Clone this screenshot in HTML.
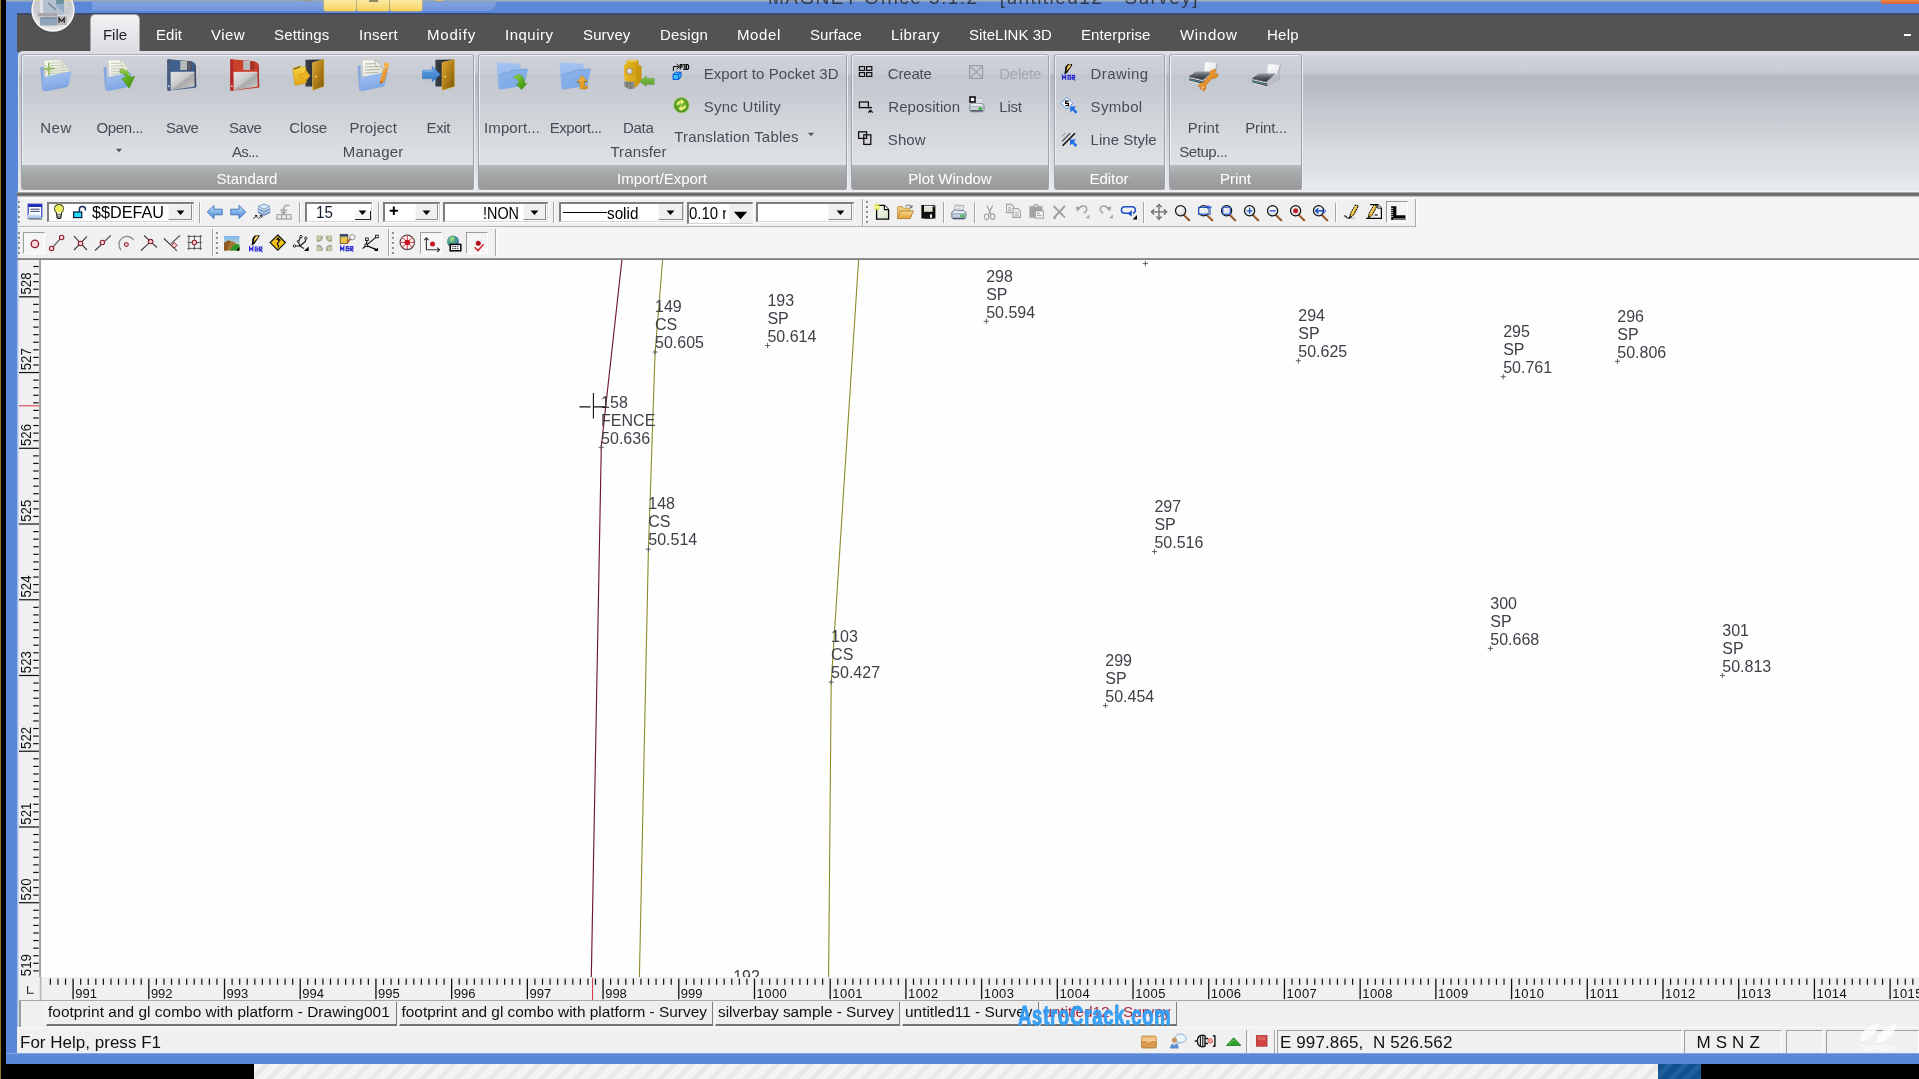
<!DOCTYPE html>
<html><head><meta charset="utf-8"><title>MAGNET Office - [untitled12 - Survey]</title>
<style>
html,body{margin:0;padding:0;}
body{width:1919px;height:1079px;overflow:hidden;background:#000;position:relative;font-family:"Liberation Sans",sans-serif;}
.a{position:absolute;display:block;box-sizing:border-box;}
.t{position:absolute;white-space:pre;font-family:"Liberation Sans",sans-serif;}
#root{position:absolute;left:0;top:0;width:1919px;height:1079px;overflow:hidden;will-change:transform;transform:translateZ(0);}
</style></head><body><div id="root">
<div class="a" style="left:0px;top:0px;width:1919px;height:1079px;background:#000;"></div>
<div class="a" style="left:0px;top:0px;width:1.2px;height:1079px;background:#9a7c28;"></div>
<div class="a" style="left:6px;top:0px;width:1913px;height:1064px;background:#5b87d8;"></div>
<div class="a" style="left:6px;top:0px;width:1913px;height:2px;background:linear-gradient(#9fb0bd,#8299c4);"></div>
<div class="a" style="left:92px;top:2px;width:404px;height:9px;background:linear-gradient(#86a3e0,#7397dc);border-radius:0 0 8px 0;opacity:.9;"></div>
<div class="a" style="left:324px;top:0px;width:32px;height:11px;background:linear-gradient(#fbe9a9,#f9dc7a 60%,#f3cf62);border-radius:0 0 2px 2px;box-shadow:0 0 0 0.5px #d8b65a;"></div>
<div class="a" style="left:357px;top:0px;width:32px;height:11px;background:linear-gradient(#fbe9a9,#f9dc7a 60%,#f3cf62);border-radius:0 0 2px 2px;box-shadow:0 0 0 0.5px #d8b65a;"></div>
<div class="a" style="left:390px;top:0px;width:32px;height:11px;background:linear-gradient(#fbe9a9,#f9dc7a 60%,#f3cf62);border-radius:0 0 2px 2px;box-shadow:0 0 0 0.5px #d8b65a;"></div>
<div class="a" style="left:369px;top:0px;width:9px;height:1.5px;background:#8d8a62;"></div>
<div class="a" style="left:435px;top:0px;width:8px;height:1.2px;background:#d9c25e;"></div>
<div class="a" style="left:302px;top:0px;width:10px;height:1px;background:#9a9a8c;"></div>
<span class="t" style="left:768.00px;top:-11.88px;font-size:19px;line-height:19px;color:#23262e;letter-spacing:1.444px;opacity:.8;">MAGNET Office 5.1.2 - [untitled12 - Survey]</span>
<div class="a" style="left:1880.5px;top:0px;width:38.5px;height:3.6px;background:linear-gradient(#f38a3e,#e2703c 55%,#cf5f44);border-radius:0 0 0 2px;"></div>
<div class="a" style="left:17px;top:13px;width:1902px;height:39px;background:#555254;"></div>
<div class="a" style="left:17px;top:12.8px;width:1902px;height:1.9px;background:linear-gradient(#3b4a70,#444a62);"></div>
<div class="a" style="left:91px;top:15px;width:48px;height:38px;background:linear-gradient(#f2f3f4,#e3e5e8 55%,#dadce2);border-radius:4px 4px 0 0;box-shadow:0 0 0 1px rgba(230,232,236,.55);"></div>
<span class="t" style="left:103.00px;top:26.70px;font-size:15px;line-height:15px;color:#1e1e22;letter-spacing:-0.043px;">File</span>
<span class="t" style="left:156.00px;top:26.70px;font-size:15px;line-height:15px;color:#fff;letter-spacing:0.038px;">Edit</span>
<span class="t" style="left:211.00px;top:26.70px;font-size:15px;line-height:15px;color:#fff;letter-spacing:0.440px;">View</span>
<span class="t" style="left:274.00px;top:26.70px;font-size:15px;line-height:15px;color:#fff;letter-spacing:0.163px;">Settings</span>
<span class="t" style="left:359.00px;top:26.70px;font-size:15px;line-height:15px;color:#fff;letter-spacing:0.248px;">Insert</span>
<span class="t" style="left:427.00px;top:26.70px;font-size:15px;line-height:15px;color:#fff;letter-spacing:0.803px;">Modify</span>
<span class="t" style="left:505.00px;top:26.70px;font-size:15px;line-height:15px;color:#fff;letter-spacing:0.497px;">Inquiry</span>
<span class="t" style="left:583.00px;top:26.70px;font-size:15px;line-height:15px;color:#fff;letter-spacing:0.136px;">Survey</span>
<span class="t" style="left:660.00px;top:26.70px;font-size:15px;line-height:15px;color:#fff;letter-spacing:0.218px;">Design</span>
<span class="t" style="left:737.00px;top:26.70px;font-size:15px;line-height:15px;color:#fff;letter-spacing:0.629px;">Model</span>
<span class="t" style="left:810.00px;top:26.70px;font-size:15px;line-height:15px;color:#fff;letter-spacing:0.044px;">Surface</span>
<span class="t" style="left:891.00px;top:26.70px;font-size:15px;line-height:15px;color:#fff;letter-spacing:0.450px;">Library</span>
<span class="t" style="left:969.00px;top:26.70px;font-size:15px;line-height:15px;color:#fff;letter-spacing:0.042px;">SiteLINK 3D</span>
<span class="t" style="left:1081.00px;top:26.70px;font-size:15px;line-height:15px;color:#fff;letter-spacing:0.114px;">Enterprise</span>
<span class="t" style="left:1180.00px;top:26.70px;font-size:15px;line-height:15px;color:#fff;letter-spacing:0.692px;">Window</span>
<span class="t" style="left:1267.00px;top:26.70px;font-size:15px;line-height:15px;color:#fff;letter-spacing:0.288px;">Help</span>
<div class="a" style="left:1903.7px;top:33.5px;width:7.4px;height:2.7px;background:#fff;"></div>
<svg class="a" style="left:28px;top:0px;" width="52" height="36" viewBox="0 0 52 36">
<defs>
<radialGradient id="ab1" cx="50%" cy="30%" r="75%"><stop offset="0" stop-color="#d9dde0"/><stop offset=".6" stop-color="#c6c9cc"/><stop offset="1" stop-color="#f4f4f4"/></radialGradient>
<clipPath id="abc"><circle cx="25" cy="10" r="20.5"/></clipPath>
</defs>
<circle cx="25" cy="10.5" r="22.3" fill="#3e3c3f" opacity=".55"/>
<circle cx="25" cy="10" r="21.8" fill="#f6f6f6"/>
<circle cx="25" cy="10" r="20.3" fill="url(#ab1)"/>
<g clip-path="url(#abc)">
<rect x="4" y="-12" width="42" height="13" fill="#e6d48a" opacity=".8"/>
<rect x="12" y="-2" width="24" height="17" fill="#b3c0cf"/>
<rect x="12" y="-2" width="3" height="20" fill="#dfe3e6"/>
<path d="M28 -2 L36 -2 L36 13 L28 6Z" fill="#95adc8"/>
<path d="M20 3 L28 10" stroke="#6f7f8f" stroke-width="1.2"/>
<path d="M28 0 h8 v4 h-8z" fill="#5f8d96" opacity=".8"/>
<rect x="10" y="13" width="19" height="3.4" fill="#a9a4ac"/>
<rect x="12" y="17.5" width="17" height="8" fill="#8fa3ba"/>
<rect x="12" y="17.5" width="17" height="1.3" fill="#76879b"/>
<rect x="29" y="15" width="10" height="10" fill="#b9b9b9"/>
<rect x="29" y="15" width="10" height="1.2" fill="#dedede"/>
<path d="M31 23 v-5 l2.6 3.2 l2.6 -3.2 v5" fill="none" stroke="#2c2c2c" stroke-width="1.3"/>
<path d="M5 26 Q25 38 45 26 L45 34 L5 34Z" fill="#fbfbfb" opacity=".95"/>
</g>
</svg>
<div class="a" style="left:18px;top:51px;width:1901px;height:141px;background:linear-gradient(#dcdde3 0px,#dbdce2 2.6px,#d0d3da 3.6px,#c8cbd3 20.5px,#b4b9c3 24px,#babec7 40px,#c9cdd3 70px,#d8dbdf 100px,#e5e8ea 132px,#e9eced 141px);border-radius:5px 0 0 0;border-top:1px solid #dedfe5;border-left:1px solid #dfe3ea;"></div>
<div class="a" style="left:18px;top:190.6px;width:1901px;height:1.8px;background:#f1f2f3;"></div>
<div class="a" style="left:17px;top:192px;width:1902px;height:5px;background:linear-gradient(#e4e6e8,#8c8c8c 14%,#5e5e5e 42%,#6c6c6c 64%,#bdbdbd 90%,#e6e6e6);"></div>
<div class="a" style="left:22px;top:54.9px;width:453px;height:136.5px;border-radius:3px;border:1.1px solid rgba(238,240,247,.9);"></div>
<div class="a" style="left:22px;top:54.9px;width:452px;height:110.4px;background:linear-gradient(rgba(255,255,255,0),rgba(255,255,255,.02) 17px,rgba(255,255,255,.2) 21px,rgba(255,255,255,.17) 60px,rgba(255,255,255,.05));border-radius:3px 3px 0 0;"></div>
<div class="a" style="left:22px;top:165px;width:452px;height:25.4px;background:linear-gradient(#b6baba,#a6a9a9 35%,#9d9e9f 70%,#9a9899);border-radius:0 0 3.5px 3.5px;"></div>
<div class="a" style="left:21px;top:53.9px;width:453px;height:136.6px;border-radius:3px;border:1px solid #9fa1a8;border-top-color:#aeb0b6;"></div>
<span class="t" style="left:216.56px;top:170.70px;font-size:15px;line-height:15px;color:#fff;">Standard</span>
<div class="a" style="left:478.5px;top:54.9px;width:369.0px;height:136.5px;border-radius:3px;border:1.1px solid rgba(238,240,247,.9);"></div>
<div class="a" style="left:478.5px;top:54.9px;width:368.0px;height:110.4px;background:linear-gradient(rgba(255,255,255,0),rgba(255,255,255,.02) 17px,rgba(255,255,255,.2) 21px,rgba(255,255,255,.17) 60px,rgba(255,255,255,.05));border-radius:3px 3px 0 0;"></div>
<div class="a" style="left:478.5px;top:165px;width:368.0px;height:25.4px;background:linear-gradient(#b6baba,#a6a9a9 35%,#9d9e9f 70%,#9a9899);border-radius:0 0 3.5px 3.5px;"></div>
<div class="a" style="left:477.5px;top:53.9px;width:369.0px;height:136.6px;border-radius:3px;border:1px solid #9fa1a8;border-top-color:#aeb0b6;"></div>
<span class="t" style="left:616.99px;top:170.70px;font-size:15px;line-height:15px;color:#fff;">Import/Export</span>
<div class="a" style="left:851.5px;top:54.9px;width:198.5px;height:136.5px;border-radius:3px;border:1.1px solid rgba(238,240,247,.9);"></div>
<div class="a" style="left:851.5px;top:54.9px;width:197.5px;height:110.4px;background:linear-gradient(rgba(255,255,255,0),rgba(255,255,255,.02) 17px,rgba(255,255,255,.2) 21px,rgba(255,255,255,.17) 60px,rgba(255,255,255,.05));border-radius:3px 3px 0 0;"></div>
<div class="a" style="left:851.5px;top:165px;width:197.5px;height:25.4px;background:linear-gradient(#b6baba,#a6a9a9 35%,#9d9e9f 70%,#9a9899);border-radius:0 0 3.5px 3.5px;"></div>
<div class="a" style="left:850.5px;top:53.9px;width:198.5px;height:136.6px;border-radius:3px;border:1px solid #9fa1a8;border-top-color:#aeb0b6;"></div>
<span class="t" style="left:908.32px;top:170.70px;font-size:15px;line-height:15px;color:#fff;">Plot Window</span>
<div class="a" style="left:1054.5px;top:54.9px;width:111.0px;height:136.5px;border-radius:3px;border:1.1px solid rgba(238,240,247,.9);"></div>
<div class="a" style="left:1054.5px;top:54.9px;width:110.0px;height:110.4px;background:linear-gradient(rgba(255,255,255,0),rgba(255,255,255,.02) 17px,rgba(255,255,255,.2) 21px,rgba(255,255,255,.17) 60px,rgba(255,255,255,.05));border-radius:3px 3px 0 0;"></div>
<div class="a" style="left:1054.5px;top:165px;width:110.0px;height:25.4px;background:linear-gradient(#b6baba,#a6a9a9 35%,#9d9e9f 70%,#9a9899);border-radius:0 0 3.5px 3.5px;"></div>
<div class="a" style="left:1053.5px;top:53.9px;width:111.0px;height:136.6px;border-radius:3px;border:1px solid #9fa1a8;border-top-color:#aeb0b6;"></div>
<span class="t" style="left:1089.41px;top:170.70px;font-size:15px;line-height:15px;color:#fff;">Editor</span>
<div class="a" style="left:1169.5px;top:54.9px;width:133.5px;height:136.5px;border-radius:3px;border:1.1px solid rgba(238,240,247,.9);"></div>
<div class="a" style="left:1169.5px;top:54.9px;width:132.5px;height:110.4px;background:linear-gradient(rgba(255,255,255,0),rgba(255,255,255,.02) 17px,rgba(255,255,255,.2) 21px,rgba(255,255,255,.17) 60px,rgba(255,255,255,.05));border-radius:3px 3px 0 0;"></div>
<div class="a" style="left:1169.5px;top:165px;width:132.5px;height:25.4px;background:linear-gradient(#b6baba,#a6a9a9 35%,#9d9e9f 70%,#9a9899);border-radius:0 0 3.5px 3.5px;"></div>
<div class="a" style="left:1168.5px;top:53.9px;width:133.5px;height:136.6px;border-radius:3px;border:1px solid #9fa1a8;border-top-color:#aeb0b6;"></div>
<span class="t" style="left:1220.08px;top:170.70px;font-size:15px;line-height:15px;color:#fff;">Print</span>
<span class="t" style="left:40.20px;top:120.00px;font-size:15px;line-height:15px;color:#474c56;letter-spacing:0.531px;">New</span>
<span class="t" style="left:96.50px;top:120.00px;font-size:15px;line-height:15px;color:#474c56;letter-spacing:-0.385px;">Open...</span>
<span class="t" style="left:166.00px;top:120.00px;font-size:15px;line-height:15px;color:#474c56;letter-spacing:-0.422px;">Save</span>
<span class="t" style="left:229.00px;top:120.00px;font-size:15px;line-height:15px;color:#474c56;letter-spacing:-0.422px;">Save</span>
<span class="t" style="left:232.00px;top:144.20px;font-size:15px;line-height:15px;color:#474c56;letter-spacing:-0.801px;">As...</span>
<span class="t" style="left:289.30px;top:120.00px;font-size:15px;line-height:15px;color:#474c56;letter-spacing:-0.130px;">Close</span>
<span class="t" style="left:349.50px;top:120.00px;font-size:15px;line-height:15px;color:#474c56;letter-spacing:0.116px;">Project</span>
<span class="t" style="left:342.80px;top:144.20px;font-size:15px;line-height:15px;color:#474c56;letter-spacing:0.214px;">Manager</span>
<span class="t" style="left:426.50px;top:120.00px;font-size:15px;line-height:15px;color:#474c56;letter-spacing:-0.376px;">Exit</span>
<span class="t" style="left:484.00px;top:120.00px;font-size:15px;line-height:15px;color:#474c56;letter-spacing:0.110px;">Import...</span>
<span class="t" style="left:549.70px;top:120.00px;font-size:15px;line-height:15px;color:#474c56;letter-spacing:-0.439px;">Export...</span>
<span class="t" style="left:622.90px;top:120.00px;font-size:15px;line-height:15px;color:#474c56;letter-spacing:-0.271px;">Data</span>
<span class="t" style="left:610.40px;top:144.20px;font-size:15px;line-height:15px;color:#474c56;letter-spacing:0.114px;">Transfer</span>
<span class="t" style="left:1187.70px;top:120.00px;font-size:15px;line-height:15px;color:#474c56;letter-spacing:0.151px;">Print</span>
<span class="t" style="left:1179.30px;top:144.20px;font-size:15px;line-height:15px;color:#474c56;letter-spacing:-0.463px;">Setup...</span>
<span class="t" style="left:1245.30px;top:120.00px;font-size:15px;line-height:15px;color:#474c56;letter-spacing:-0.206px;">Print...</span>
<svg class="a" style="left:114.5px;top:147.5px;" width="8" height="5" viewBox="0 0 8 5"><path d="M1 .8 L7 .8 L4 4.2Z" fill="#50545c"/></svg>
<span class="t" style="left:703.70px;top:66.10px;font-size:15px;line-height:15px;color:#474c56;letter-spacing:0.079px;">Export to Pocket 3D</span>
<span class="t" style="left:703.70px;top:99.00px;font-size:15px;line-height:15px;color:#474c56;letter-spacing:0.268px;">Sync Utility</span>
<span class="t" style="left:674.30px;top:128.90px;font-size:15px;line-height:15px;color:#474c56;letter-spacing:0.194px;">Translation Tables</span>
<svg class="a" style="left:806.5px;top:132px;" width="8" height="5" viewBox="0 0 8 5"><path d="M1 .8 L7 .8 L4 4.2Z" fill="#50545c"/></svg>
<span class="t" style="left:887.80px;top:65.80px;font-size:15px;line-height:15px;color:#474c56;letter-spacing:-0.187px;">Create</span>
<span class="t" style="left:888.20px;top:99.00px;font-size:15px;line-height:15px;color:#474c56;letter-spacing:0.122px;">Reposition</span>
<span class="t" style="left:887.80px;top:131.80px;font-size:15px;line-height:15px;color:#474c56;letter-spacing:0.094px;">Show</span>
<span class="t" style="left:999.30px;top:65.80px;font-size:15px;line-height:15px;color:#a3a7ae;letter-spacing:-0.277px;">Delete</span>
<span class="t" style="left:999.30px;top:99.00px;font-size:15px;line-height:15px;color:#474c56;letter-spacing:-0.236px;">List</span>
<span class="t" style="left:1090.60px;top:65.80px;font-size:15px;line-height:15px;color:#474c56;letter-spacing:0.411px;">Drawing</span>
<span class="t" style="left:1090.60px;top:99.00px;font-size:15px;line-height:15px;color:#474c56;letter-spacing:0.314px;">Symbol</span>
<span class="t" style="left:1090.60px;top:131.80px;font-size:15px;line-height:15px;color:#474c56;letter-spacing:0.023px;">Line Style</span>
<svg class="a" style="left:40px;top:59px;" width="32" height="32" viewBox="0 0 32 32"><defs><linearGradient id="nff" x1="0" y1="0" x2="0.3" y2="1"><stop offset="0" stop-color="#9dbdee"/><stop offset=".6" stop-color="#8fb3ea"/><stop offset="1" stop-color="#79a3e2"/></linearGradient>
<linearGradient id="nfb" x1="0" y1="0" x2="1" y2="0"><stop offset="0" stop-color="#7f9fd8"/><stop offset="1" stop-color="#95b4e6"/></linearGradient>
<linearGradient id="npp" x1="0" y1="0" x2="1" y2="1"><stop offset="0" stop-color="#fafaf4"/><stop offset="1" stop-color="#dcdfd2"/></linearGradient>
<linearGradient id="ngr" x1="0" y1="0" x2="1" y2="1"><stop offset="0" stop-color="#9ad04e"/><stop offset=".5" stop-color="#5fae1c"/><stop offset="1" stop-color="#3d8a10"/></linearGradient></defs>
<path d="M0.3 8.5 L3.3 7.5 L5 30.5 L2.2 31.5Z" fill="url(#nfb)"/>
<path d="M4.2 1.2 L21.5 0.8 L29.8 11.5 L30 17 L5.5 21.5Z" fill="url(#npp)" stroke="#c3c7b6" stroke-width=".5"/>
<path d="M21.5 0.8 L29.8 11.5 L23 10.5Z" fill="#e9ebe0" stroke="#b9bdac" stroke-width=".4"/>
<g stroke="#c4c8b3" stroke-width=".9"><path d="M10 4.2 L22 3.6"/><path d="M11 6.8 L24.5 6"/><path d="M12 9.4 L26 8.6"/><path d="M12 12 L27.5 11.2"/><path d="M9 14.8 L28 13.6"/></g>
<g stroke="#7aa83e" stroke-linecap="round" opacity=".85"><path d="M3.5 10.2 L14 9.6" stroke-width="1.5"/><path d="M8.7 4 L8.9 16" stroke-width="1.5"/><path d="M5.2 6.4 L12.2 13.4" stroke-width="1" opacity=".75"/><path d="M12.4 6.2 L5.2 13.6" stroke-width="1" opacity=".75"/></g>
<path d="M3.3 19.6 Q4 18.2 6 17.6 L30.2 12.6 Q31.8 12.4 31.4 14 L28.4 26.2 Q28 27.4 26.6 27.8 L5 32 Q3.6 32.2 3.4 31Z" fill="url(#nff)"/>
<path d="M3.4 31 L5 32 L26.6 27.8 L28 26.6" fill="none" stroke="#6e98d8" stroke-width=".7" opacity=".8"/>
</svg>
<svg class="a" style="left:103px;top:59px;" width="32" height="32" viewBox="0 0 32 32"><defs><linearGradient id="off" x1="0" y1="0" x2="0.3" y2="1"><stop offset="0" stop-color="#9dbdee"/><stop offset=".6" stop-color="#8fb3ea"/><stop offset="1" stop-color="#79a3e2"/></linearGradient>
<linearGradient id="ofb" x1="0" y1="0" x2="1" y2="0"><stop offset="0" stop-color="#7f9fd8"/><stop offset="1" stop-color="#95b4e6"/></linearGradient>
<linearGradient id="opp" x1="0" y1="0" x2="1" y2="1"><stop offset="0" stop-color="#fafaf4"/><stop offset="1" stop-color="#dcdfd2"/></linearGradient>
<linearGradient id="ogr" x1="0" y1="0" x2="1" y2="1"><stop offset="0" stop-color="#9ad04e"/><stop offset=".5" stop-color="#5fae1c"/><stop offset="1" stop-color="#3d8a10"/></linearGradient></defs>
<path d="M0.5 8.5 L3.5 7.5 L5 30.5 L2.2 31.5Z" fill="url(#ofb)"/>
<path d="M5.2 1 L17.5 0.8 L24.5 7.5 L25 18 L6.5 21.5Z" fill="url(#opp)" stroke="#c3c7b6" stroke-width=".5"/>
<path d="M17.5 0.8 L24.5 7.5 L18.4 6.8Z" fill="#e9ebe0" stroke="#aeb2a2" stroke-width=".4"/>
<g stroke="#c1c5b2" stroke-width=".9"><path d="M8 4.6 L18 4.2"/><path d="M8 7.3 L20 6.8"/><path d="M8 10 L21 9.5"/><path d="M8 12.7 L20 12.2"/><path d="M8 15.4 L18 14.8"/></g>
<path d="M3.5 19.8 Q4 18.4 6 17.8 L26 13.8 L28.5 14 L27 26.6 Q26.6 27.6 25.4 28 L5 32 Q3.6 32.2 3.4 31Z" fill="url(#off)"/>
<path d="M17 10.5 Q25.5 9 27.2 18.2 L31.6 17.6 L26.2 29.2 L18.6 19.4 L22.8 18.8 Q22.4 14.2 17 13.8Z" fill="url(#ogr)" stroke="#3f8a14" stroke-width=".5"/>
<path d="M17.6 11.2 Q24.6 10 26.2 17" fill="none" stroke="#b8e07a" stroke-width=".9" opacity=".8"/>
</svg>
<svg class="a" style="left:167px;top:59px;" width="30" height="32" viewBox="0 0 30 32"><defs><linearGradient id="s1lb" x1="0" y1="0" x2="1" y2="1"><stop offset="0" stop-color="#e6e6e6"/><stop offset=".45" stop-color="#c9c9c9"/><stop offset=".55" stop-color="#a9a9a9"/><stop offset="1" stop-color="#cfcfcf"/></linearGradient></defs>
<path d="M0.3 1.2 Q0.3 0.2 1.4 0.3 L24 2.2 Q28.6 3 28.8 8 L29.2 27.8 Q29.2 28.6 28.4 28.8 L1.4 31.8 Q0.4 31.8 0.4 30.8Z" fill="#3f5f8d"/>
<path d="M0.3 1.2 Q0.3 0.2 1.4 0.3 L3 0.5 L3 31.6 L1.4 31.8 Q0.4 31.8 0.4 30.8Z" fill="#4a5a78"/>
<path d="M26.2 3.6 Q28.6 4.6 28.8 8 L29.2 27.8 L27.4 28 L27.4 5Z" fill="#3a4560"/>
<path d="M13.2 1.4 L25 2.6 L25 11.4 L13.2 11Z" fill="#4a4f62"/>
<path d="M13.2 1.4 L20 2 L20 11 L13.2 11Z" fill="#b7babb"/>
<path d="M21 3 L23.6 3.2 L23.6 10.2 L21 10Z" fill="#5a6070"/>
<path d="M3.6 13.4 L27.4 13.2 L27.6 27.6 L3.8 31.2Z" fill="url(#s1lb)"/>
<path d="M3.6 13.4 L27.4 13.2" stroke="#f4f4f4" stroke-width=".8"/>
<rect x="1" y="26.4" width="1.6" height="1.6" fill="#e8e8e8" opacity=".9"/>
</svg>
<svg class="a" style="left:230px;top:59px;" width="30" height="32" viewBox="0 0 30 32"><defs><linearGradient id="s2lb" x1="0" y1="0" x2="1" y2="1"><stop offset="0" stop-color="#e6e6e6"/><stop offset=".45" stop-color="#c9c9c9"/><stop offset=".55" stop-color="#a9a9a9"/><stop offset="1" stop-color="#cfcfcf"/></linearGradient></defs>
<path d="M0.3 1.2 Q0.3 0.2 1.4 0.3 L24 2.2 Q28.6 3 28.8 8 L29.2 27.8 Q29.2 28.6 28.4 28.8 L1.4 31.8 Q0.4 31.8 0.4 30.8Z" fill="#cb3e28"/>
<path d="M0.3 1.2 Q0.3 0.2 1.4 0.3 L3 0.5 L3 31.6 L1.4 31.8 Q0.4 31.8 0.4 30.8Z" fill="#b3262a"/>
<path d="M26.2 3.6 Q28.6 4.6 28.8 8 L29.2 27.8 L27.4 28 L27.4 5Z" fill="#a8302a"/>
<path d="M13.2 1.4 L25 2.6 L25 11.4 L13.2 11Z" fill="#b2382c"/>
<path d="M13.2 1.4 L20 2 L20 11 L13.2 11Z" fill="#b7babb"/>
<path d="M21 3 L23.6 3.2 L23.6 10.2 L21 10Z" fill="#a33026"/>
<path d="M3.6 13.4 L27.4 13.2 L27.6 27.6 L3.8 31.2Z" fill="url(#s2lb)"/>
<path d="M3.6 13.4 L27.4 13.2" stroke="#f4f4f4" stroke-width=".8"/>
<rect x="1" y="26.4" width="1.6" height="1.6" fill="#e8e8e8" opacity=".9"/>
</svg>
<svg class="a" style="left:292px;top:59px;" width="33" height="32" viewBox="0 0 33 32"><defs><linearGradient id="cdg" x1="0" y1="0" x2="1" y2="1"><stop offset="0" stop-color="#d9a530"/><stop offset=".35" stop-color="#c08a1e"/><stop offset="1" stop-color="#7a5608"/></linearGradient>
<linearGradient id="cfr" x1="0" y1="0" x2="1" y2="0"><stop offset="0" stop-color="#3c4048"/><stop offset="1" stop-color="#15171a"/></linearGradient>
<linearGradient id="car" x1="0" y1="0" x2="0" y2="1"><stop offset="0" stop-color="#f8d44c"/><stop offset="1" stop-color="#e2a412"/></linearGradient></defs>
<path d="M13.4 0.8 L32 0.4 L20.6 4 L20.6 27.4 L13.4 27.4Z" fill="url(#cfr)"/>
<path d="M20.6 3.6 L32 0.2 L32 27.6 L20.6 31.6Z" fill="url(#cdg)" stroke="#e8c65a" stroke-width=".5"/>
<circle cx="23.8" cy="17.6" r=".9" fill="#fbe9a0"/>

<path d="M0.6 9.6 L8.6 6.6 L9.6 8.2 L13.4 7.4 L14.2 11.6 L18 16.8 L14.4 21.4 L14.2 24 L3 26.6Z" fill="url(#car)" stroke="#c9921a" stroke-width=".5"/>
<path d="M1.6 10.2 L8.2 7.8" stroke="#5a4a16" stroke-width="1.1"/>
<path d="M7.5 15 L13 14.2 L13 11.4 L17.8 16.8 L13.2 21.4 L13.2 19 L7.8 19.6Z" fill="#eeb226" stroke="#c88a12" stroke-width=".4"/>
</svg>
<svg class="a" style="left:422px;top:59px;" width="34" height="32" viewBox="0 0 34 32"><defs><linearGradient id="edg" x1="0" y1="0" x2="1" y2="1"><stop offset="0" stop-color="#d9a530"/><stop offset=".35" stop-color="#c08a1e"/><stop offset="1" stop-color="#7a5608"/></linearGradient>
<linearGradient id="efr" x1="0" y1="0" x2="1" y2="0"><stop offset="0" stop-color="#3c4048"/><stop offset="1" stop-color="#15171a"/></linearGradient>
<linearGradient id="ear" x1="0" y1="0" x2="0" y2="1"><stop offset="0" stop-color="#6aa6e2"/><stop offset="1" stop-color="#2f78c8"/></linearGradient></defs>
<path d="M13.4 0.8 L32.6 0.4 L20 4 L20 27.4 L13.4 27.4Z" fill="url(#efr)"/>
<path d="M20 3.6 L32.6 0.2 L32.6 27.6 L20 31.6Z" fill="url(#edg)" stroke="#e8c65a" stroke-width=".5"/>
<circle cx="23.2" cy="17.6" r=".9" fill="#fbe9a0"/>

<path d="M0.4 11.2 L10.2 11 L10.2 7.2 L18.4 15.6 L10.2 22.8 L10.2 19.6 L0.4 19.8Z" fill="url(#ear)" stroke="#2a6cb8" stroke-width=".4"/>
<path d="M1 12 L10.8 11.8" stroke="#9cc8f2" stroke-width=".8"/>
</svg>
<svg class="a" style="left:357px;top:59px;" width="33" height="32" viewBox="0 0 33 32"><defs><linearGradient id="pff" x1="0" y1="0" x2="0.3" y2="1"><stop offset="0" stop-color="#9dbdee"/><stop offset=".6" stop-color="#8fb3ea"/><stop offset="1" stop-color="#79a3e2"/></linearGradient>
<linearGradient id="pfb" x1="0" y1="0" x2="1" y2="0"><stop offset="0" stop-color="#7f9fd8"/><stop offset="1" stop-color="#95b4e6"/></linearGradient>
<linearGradient id="ppp" x1="0" y1="0" x2="1" y2="1"><stop offset="0" stop-color="#fafaf4"/><stop offset="1" stop-color="#dcdfd2"/></linearGradient>
<linearGradient id="pgr" x1="0" y1="0" x2="1" y2="1"><stop offset="0" stop-color="#9ad04e"/><stop offset=".5" stop-color="#5fae1c"/><stop offset="1" stop-color="#3d8a10"/></linearGradient><linearGradient id="por" x1="0" y1="0" x2="1" y2="1"><stop offset="0" stop-color="#f7b850"/><stop offset="1" stop-color="#d9781a"/></linearGradient></defs>
<path d="M0.5 7 L3.5 6 L5 30 L2.2 31.4Z" fill="url(#pfb)"/>
<path d="M5.2 1 L17.5 0.8 L25 8.5 L25 18 L6.5 21.5Z" fill="url(#ppp)" stroke="#c3c7b6" stroke-width=".5"/>
<path d="M17.5 0.8 Q22 3 25 8.5 L19 7.4Z" fill="#eceee4" stroke="#8e9286" stroke-width=".5"/>
<g stroke="#a9ada0" stroke-width=".9"><path d="M8 5 L18 4.6"/><path d="M8 8 L22 7.5"/><path d="M8 11 L23 10.4"/><path d="M8 14 L21 13.4"/></g>
<path d="M3.5 19.8 Q4 18.4 6 17.8 L29 13 Q31 12.8 30.6 14.4 L27.6 26.2 Q27.2 27.4 26 27.8 L5 32 Q3.6 32.2 3.4 31Z" fill="url(#pff)"/>
<circle cx="29.4" cy="6" r="2.6" fill="#f5b04a"/>
<path d="M26.6 9.6 L31.4 8.6 L27.4 22.6 L23 25 L23.4 19.6Z" fill="url(#por)"/>
<path d="M23 25 L23.4 21.4 L26 23.4Z" fill="#b8641a"/>
</svg>
<svg class="a" style="left:496px;top:62px;" width="32" height="28" viewBox="0 0 32 28"><defs><linearGradient id="ia" x1="0" y1="0" x2="0" y2="1"><stop offset="0" stop-color="#a4c4f0"/><stop offset="1" stop-color="#86aee8"/></linearGradient>
<linearGradient id="ib" x1="0" y1="0" x2=".4" y2="1"><stop offset="0" stop-color="#8db4ec"/><stop offset="1" stop-color="#7daae6"/></linearGradient></defs>
<path d="M0.6 1.6 Q0.6 0.6 1.8 0.6 L23 1.4 Q24.4 1.6 24.4 3 L24.6 7.4 L3 11 L3.4 27 L2.4 27.2Z" fill="url(#ia)"/>
<path d="M2.6 13.6 Q2.8 11.4 5 10.8 L13 9.6 L15 8 L30.6 6.6 Q32.2 6.6 31.8 8.2 L28.4 22.6 Q28 23.8 26.8 24 L5 27.4 Q3.4 27.6 3.4 26Z" fill="url(#ib)"/>
<path d="M2.8 14 Q3.2 11.8 5.4 11.4 L13.2 10.2 L15.2 8.6 L30.6 7.2" fill="none" stroke="#6a96d6" stroke-width=".7" opacity=".8"/>
<defs><linearGradient id="igr" x1="0" y1="0" x2="1" y2="1"><stop offset="0" stop-color="#a6dc62"/><stop offset=".5" stop-color="#5fae1c"/><stop offset="1" stop-color="#3d8a10"/></linearGradient></defs>
<path d="M17 15.6 L22 12.2 Q28.4 13.4 28.8 21.6 L31 21.4 L25.6 27.6 L19.6 21.8 L23 21.6 Q23 17.4 19.6 16.4Z" fill="url(#igr)" stroke="#3f8a14" stroke-width=".4"/>
</svg>
<svg class="a" style="left:559px;top:62px;" width="32" height="28" viewBox="0 0 32 28"><defs><linearGradient id="xa" x1="0" y1="0" x2="0" y2="1"><stop offset="0" stop-color="#a4c4f0"/><stop offset="1" stop-color="#86aee8"/></linearGradient>
<linearGradient id="xb" x1="0" y1="0" x2=".4" y2="1"><stop offset="0" stop-color="#8db4ec"/><stop offset="1" stop-color="#7daae6"/></linearGradient></defs>
<path d="M0.6 1.6 Q0.6 0.6 1.8 0.6 L23 1.4 Q24.4 1.6 24.4 3 L24.6 7.4 L3 11 L3.4 27 L2.4 27.2Z" fill="url(#xa)"/>
<path d="M2.6 13.6 Q2.8 11.4 5 10.8 L13 9.6 L15 8 L30.6 6.6 Q32.2 6.6 31.8 8.2 L28.4 22.6 Q28 23.8 26.8 24 L5 27.4 Q3.4 27.6 3.4 26Z" fill="url(#xb)"/>
<path d="M2.8 14 Q3.2 11.8 5.4 11.4 L13.2 10.2 L15.2 8.6 L30.6 7.2" fill="none" stroke="#6a96d6" stroke-width=".7" opacity=".8"/>
<defs><linearGradient id="xor" x1="0" y1="0" x2="1" y2="1"><stop offset="0" stop-color="#f6be52"/><stop offset="1" stop-color="#cf860e"/></linearGradient></defs>
<path d="M23 13.2 L28.4 19.6 L25.4 19.8 L25.6 24 Q27.2 25 28.6 23.6 L28.4 26.4 Q25.4 28 21.2 26.6 L20.8 20.2 L17.8 20.4Z" fill="url(#xor)" stroke="#b8780c" stroke-width=".4"/>
<path d="M17.6 20.4 L20.6 20.2 M25.4 19.8 L28.4 19.6" stroke="#5c4a2a" stroke-width="1" opacity=".6"/>
</svg>
<svg class="a" style="left:623px;top:59px;" width="32" height="32" viewBox="0 0 32 32"><defs><linearGradient id="dty" x1="0" y1="0" x2="1" y2="0"><stop offset="0" stop-color="#e8b824"/><stop offset=".6" stop-color="#d9a616"/><stop offset="1" stop-color="#c08c0c"/></linearGradient>
<linearGradient id="dtg" x1="0" y1="0" x2="0" y2="1"><stop offset="0" stop-color="#86c24e"/><stop offset="1" stop-color="#5c9e2c"/></linearGradient></defs>
<path d="M3.4 2.6 L4.6 0.8 L14.6 0.8 L15.6 2.6 L15.6 6 L18.4 7 L18.6 21 L15.4 25.4 L13 28.6 L7.4 27.2 L3 22.4 L1.2 20 L1 7.6 Q1 5.4 3.4 4.6Z" fill="url(#dty)"/>
<path d="M5.6 2 L13.6 2" stroke="#f2dc86" stroke-width="1.4"/>
<path d="M12.6 8 L17.4 8 L17.4 20 L12.6 20Z" fill="#c9980e" opacity=".7"/>
<circle cx="6.6" cy="12.2" r="3.4" fill="#c9c0c8" stroke="#b08a18" stroke-width=".9"/>
<circle cx="6.2" cy="11.8" r="1.8" fill="#dfd8e6"/>
<path d="M1.2 22.4 L11.6 22.8 L11.6 29.6 L7 30.2 L1.4 27.8Z" fill="#8b8d86"/>
<path d="M4 23 L4 28.6 M7.4 23 L7.4 30" stroke="#6b6d66" stroke-width="1"/>
<path d="M16.6 22.4 L23.4 16.8 L23.2 19.4 L31.2 19.6 L31 25.6 L23.2 25.2 L23.4 27.4Z" fill="url(#dtg)" stroke="#4e9426" stroke-width=".4"/>
</svg>
<svg class="a" style="left:1187px;top:59.5px;" width="33" height="33" viewBox="0 0 33 33"><defs><linearGradient id="pst" x1="0" y1="0" x2="0" y2="1"><stop offset="0" stop-color="#9a9ea6"/><stop offset=".45" stop-color="#5a5e66"/><stop offset="1" stop-color="#2e3138"/></linearGradient>
<linearGradient id="pss" x1="0" y1="0" x2="1" y2="1"><stop offset="0" stop-color="#c9ccd1"/><stop offset="1" stop-color="#8f939a"/></linearGradient>
<linearGradient id="pspa" x1="0" y1="0" x2="1" y2="1"><stop offset="0" stop-color="#ffffff"/><stop offset="1" stop-color="#dfe2e8"/></linearGradient></defs>
<path d="M18 2.2 L30.4 3 L28 12 L17.2 11.8Z" fill="url(#pspa)"/>
<path d="M30.4 3 L28 12" stroke="#8e939c" stroke-width=".8"/>
<path d="M8.8 11.5 L26 11.5 L16.4 19.7 L1.8 16.5Z" fill="url(#pst)"/>
<path d="M16.4 19.7 L29.8 12 L29.8 17 L17 24.2Z" fill="url(#pss)"/>
<path d="M18 20.6 L29.4 14 M18 22.4 L29.4 15.8" stroke="#e6e8ec" stroke-width=".6" opacity=".8"/>
<path d="M1.8 16.5 L16.4 19.7 L17 24.2 L2.6 20.6Z" fill="#3a3d44"/>
<path d="M2 17.6 L16.4 20.8" stroke="#e8ebee" stroke-width="1"/>
<path d="M2.4 19.4 L16.6 22.6" stroke="#4f8f9a" stroke-width="1"/>
<path d="M3 21.2 L16 24.6" stroke="#dfe2e6" stroke-width=".8" opacity=".8"/>
<defs><linearGradient id="wr" x1="0" y1="0" x2="1" y2="1"><stop offset="0" stop-color="#f2b04e"/><stop offset=".5" stop-color="#e39228"/><stop offset="1" stop-color="#c7720e"/></linearGradient></defs>
<path d="M26.6 9.6 Q28.6 8.6 29.6 10.4 L27.6 12.6 L28.6 14.4 L31 13.6 Q31.4 16.6 28.8 18 Q26.8 18.8 25.2 18 L18.8 25.4 Q19.6 27.6 18.4 29.4 L16.6 31.4 L15.4 28.6 L13.2 29.6 L13.8 26.2 L11.2 27 Q11.4 24.2 13.6 23 Q14.8 22.4 16 22.8 L22.6 15.2 Q21.8 12.8 23.6 11 Q24.8 9.8 26.6 9.6Z" fill="url(#wr)" stroke="#b8680e" stroke-width=".4"/>
<path d="M15.2 28.4 L16.6 26.6" stroke="#fbe2b0" stroke-width="1.2"/>
</svg>
<svg class="a" style="left:1250px;top:62px;" width="33" height="28" viewBox="0 0 33 28"><defs><linearGradient id="ppt" x1="0" y1="0" x2="0" y2="1"><stop offset="0" stop-color="#9a9ea6"/><stop offset=".45" stop-color="#5a5e66"/><stop offset="1" stop-color="#2e3138"/></linearGradient>
<linearGradient id="pps" x1="0" y1="0" x2="1" y2="1"><stop offset="0" stop-color="#c9ccd1"/><stop offset="1" stop-color="#8f939a"/></linearGradient>
<linearGradient id="pppa" x1="0" y1="0" x2="1" y2="1"><stop offset="0" stop-color="#ffffff"/><stop offset="1" stop-color="#dfe2e8"/></linearGradient></defs>
<path d="M18 2.2 L30.4 3 L28 12 L17.2 11.8Z" fill="url(#pppa)"/>
<path d="M30.4 3 L28 12" stroke="#8e939c" stroke-width=".8"/>
<path d="M8.8 11.5 L26 11.5 L16.4 19.7 L1.8 16.5Z" fill="url(#ppt)"/>
<path d="M16.4 19.7 L29.8 12 L29.8 17 L17 24.2Z" fill="url(#pps)"/>
<path d="M18 20.6 L29.4 14 M18 22.4 L29.4 15.8" stroke="#e6e8ec" stroke-width=".6" opacity=".8"/>
<path d="M1.8 16.5 L16.4 19.7 L17 24.2 L2.6 20.6Z" fill="#3a3d44"/>
<path d="M2 17.6 L16.4 20.8" stroke="#e8ebee" stroke-width="1"/>
<path d="M2.4 19.4 L16.6 22.6" stroke="#4f8f9a" stroke-width="1"/>
<path d="M3 21.2 L16 24.6" stroke="#dfe2e6" stroke-width=".8" opacity=".8"/>
</svg>
<svg class="a" style="left:672px;top:63px;" width="18" height="18" viewBox="0 0 18 18"><path d="M1.4 8 V3.6 H6.6 M4.6 1 L7.4 3.6 L4.6 6.2" fill="none" stroke="#000" stroke-width="1"/>
<g fill="none" stroke="#000" stroke-width="1.1"><path d="M8.2 6.4 V1.6 h1.8 v2.4 h-1.8"/><path d="M11.2 1.6 h1.8 v2.4 h-1.4 h1.4 v2.4 h-1.8"/><path d="M14.4 1.6 v4.8 h1.2 l1 -1 v-2.8 l-1 -1Z"/></g>
<path d="M1 11.4 L3.4 9.2 H9 L9 13.8 L6.6 16.4 H1Z" fill="#35c0f8" stroke="#0a4fd8" stroke-width="1"/>
<path d="M1 11.4 H6.6 V16.4 M6.6 11.4 L9 9.2" fill="none" stroke="#0a4fd8" stroke-width="1"/>
</svg>
<svg class="a" style="left:672.5px;top:96.5px;" width="17" height="17" viewBox="0 0 17 17"><defs><radialGradient id="sy" cx="50%" cy="45%" r="55%"><stop offset="0" stop-color="#8ac43e"/><stop offset=".7" stop-color="#5a9e26"/><stop offset="1" stop-color="#3f8420"/></radialGradient></defs>
<circle cx="8.4" cy="8.2" r="7.6" fill="url(#sy)" stroke="#9ed05a" stroke-width=".6"/>
<path d="M3.6 8 Q3.8 4 8 3.6 L8 2 L11.4 4.8 L8 7.4 L8 5.8 Q5.8 6 5.6 8Z" fill="#eef07a"/>
<path d="M13.2 8.4 Q13 12.4 8.8 12.8 L8.8 14.4 L5.4 11.6 L8.8 9 L8.8 10.6 Q11 10.4 11.2 8.4Z" fill="#eef07a"/>
</svg>
<svg class="a" style="left:858px;top:65px;" width="16" height="14" viewBox="0 0 16 14"><g fill="none" stroke="#111" stroke-width="1.2"><rect x="1.4" y="1.6" width="5.2" height="3.8"/><rect x="8.6" y="1.6" width="5.2" height="3.8"/><rect x="1.4" y="7.6" width="5.2" height="3.8"/><rect x="8.6" y="7.6" width="5.2" height="3.8"/></g></svg>
<svg class="a" style="left:858px;top:100px;" width="17" height="15" viewBox="0 0 17 15"><rect x="1.4" y="2" width="9" height="5.6" fill="none" stroke="#111" stroke-width="1.3"/><path d="M10 7.6 H14" stroke="#111" stroke-width="1.3"/><path d="M10.2 12.6 L12.4 10 L14.8 12.6 M12.4 10.4 V12.8" fill="none" stroke="#111" stroke-width="1.1"/></svg>
<svg class="a" style="left:857px;top:130px;" width="16" height="16" viewBox="0 0 16 16"><rect x="1.6" y="1.8" width="8" height="6.6" fill="none" stroke="#111" stroke-width="1.3"/><rect x="6.8" y="4.8" width="7" height="9.6" fill="none" stroke="#111" stroke-width="1.3"/></svg>
<svg class="a" style="left:968px;top:64px;" width="16" height="16" viewBox="0 0 16 16"><rect x="1.6" y="1.6" width="13" height="12.8" fill="none" stroke="#979ba3" stroke-width="1.1"/><path d="M2.4 2.4 L14 13.6 M14 2.4 L2.4 13.6" stroke="#979ba3" stroke-width="1.1"/></svg>
<svg class="a" style="left:968px;top:96px;" width="18" height="18" viewBox="0 0 18 18"><defs><linearGradient id="lp" x1="0" y1="0" x2="0" y2="1"><stop offset="0" stop-color="#f4f6f8"/><stop offset="1" stop-color="#b9c2cc"/></linearGradient></defs>
<path d="M5.6 2.2 L14.6 3 L13.4 8 L4.8 7.4Z" fill="#f6f7f9" stroke="#9aa4ae" stroke-width=".5"/>
<path d="M7.4 4 L13 4.4 M7 5.6 L12.6 6" stroke="#aab2bc" stroke-width=".7"/>
<path d="M2 8.4 L4.6 7 L14 7.6 L16 9 L16 14 L14.6 15.8 L2.6 15.8 L1.6 14Z" fill="url(#lp)" stroke="#5d6c7c" stroke-width=".7"/>
<path d="M2 10.8 H15.8" stroke="#7c8894" stroke-width=".6"/>
<rect x="10.6" y="11.4" width="3.6" height="2.4" fill="#2fae3c"/>
<path d="M2.8 14.8 H14.4" stroke="#3c4854" stroke-width="1.2"/>
<rect x="2" y="1" width="5" height="5" fill="#f8f8f8" stroke="#000" stroke-width="1.5"/>
</svg>
<svg class="a" style="left:1061px;top:62px;" width="16" height="19" viewBox="0 0 16 19"><path d="M3.4 12.6 L4.4 4.8 L6.6 2.2 L11.2 2 L11 3.6 L6.4 10.2Z" fill="#000"/>
<path d="M5.4 9.4 L6.2 4.8 L8.2 2.6 L10 2.6 L9.4 4.6Z" fill="#f0c23a"/>
<path d="M6.8 6.8 L9.4 3.2" stroke="#fbe08a" stroke-width=".9"/>
<g fill="none" stroke="#2828d2" stroke-width="1.15" stroke-linecap="square"><path d="M1.4 17.2 V13.4 l1.6 2.7 l1.6 -2.7 V17.2"/><path d="M9.6 13.4 h-2.6 V17.2 h2.6 v-2.2 h-1.2"/><path d="M11.4 17.2 V13.4 h2.2 v2.2 h-2.2 l2.4 2.4"/></g></svg>
<svg class="a" style="left:1059.5px;top:96px;" width="18" height="18" viewBox="0 0 18 18"><path d="M6.9 1.4 L12.8 7.3 L6.9 13.2 L1 7.3Z" fill="#fff" stroke="#1f6fe8" stroke-width="1" stroke-dasharray="1.4 .5"/>
<path d="M8.6 5.2 H5.6 V7.3 H8.4 V9.6 H5.4" fill="none" stroke="#000" stroke-width="1.3"/>
<path d="M10.2 10.4 h6 l-2.1 2.1 l3.4 3.4 l-1.8 1.8 l-3.4 -3.4 l-2.1 2.1Z" fill="#1f6fe8"/></svg>
<svg class="a" style="left:1060px;top:130px;" width="18" height="18" viewBox="0 0 18 18"><path d="M2 6.4 L5.4 3" stroke="#a4a8ae" stroke-width="1.2"/>
<path d="M2.2 11.2 L10.4 3" stroke="#585c64" stroke-width="1.4"/>
<path d="M2.6 15.8 L15 3.2" stroke="#111" stroke-width="1.6"/>
<path d="M10 9.6 h6 l-2.1 2.1 l3.4 3.4 l-1.8 1.8 l-3.4 -3.4 l-2.1 2.1Z" fill="#1f6fe8"/></svg>
<div class="a" style="left:17px;top:197px;width:1902px;height:61px;background:#f5f5f6;"></div>
<div class="a" style="left:19px;top:198px;width:1397px;height:29px;background:#f0f0f0;"></div>
<div class="a" style="left:19px;top:227.5px;width:477px;height:30px;background:#f0f0f0;"></div>
<div class="a" style="left:17px;top:197px;width:2px;height:61px;background:linear-gradient(90deg,#8fb0e8,#e8edf6);"></div>
<div class="a" style="left:19px;top:198px;width:1397px;height:1.2px;background:#fdfdfd;"></div>
<div class="a" style="left:19px;top:226.2px;width:1397px;height:1px;background:#b4b4b4;"></div>
<div class="a" style="left:19px;top:227.3px;width:478px;height:1.2px;background:#fdfdfd;"></div>
<div class="a" style="left:18.2px;top:201.2px;width:2.2px;height:2.2px;background:#8c8e94;box-shadow:.8px .8px 0 #fff;"></div>
<div class="a" style="left:18.2px;top:206.2px;width:2.2px;height:2.2px;background:#8c8e94;box-shadow:.8px .8px 0 #fff;"></div>
<div class="a" style="left:18.2px;top:211.2px;width:2.2px;height:2.2px;background:#8c8e94;box-shadow:.8px .8px 0 #fff;"></div>
<div class="a" style="left:18.2px;top:216.2px;width:2.2px;height:2.2px;background:#8c8e94;box-shadow:.8px .8px 0 #fff;"></div>
<div class="a" style="left:18.2px;top:221.2px;width:2.2px;height:2.2px;background:#8c8e94;box-shadow:.8px .8px 0 #fff;"></div>
<svg class="a" style="left:25px;top:203px;" width="18" height="18" viewBox="0 0 18 18"><defs><linearGradient id="lyp" x1="0" y1="0" x2="0" y2="1"><stop offset="0" stop-color="#eef4fd"/><stop offset="1" stop-color="#9fc0ea"/></linearGradient></defs>
<rect x="3.2" y="1.2" width="13.6" height="12.6" fill="#fdfdfd" stroke="#1c2cb2" stroke-width="1.1"/>
<rect x="3.2" y="1.2" width="13.6" height="2.8" fill="#1c2cb2"/>
<path d="M5.4 6.2 H14.6 M5.4 8.4 H14.6" stroke="#3a3f6a" stroke-width="1"/>
<path d="M4 10.6 H14.4 L17 15 H1.6Z" fill="url(#lyp)"/>
<path d="M1.6 15 L4.6 16.8 H17 V15Z" fill="#7d8798"/></svg>
<div class="a" style="left:46.5px;top:202px;width:147.5px;height:19.5px;background:#fff;border-left:2px solid #7e7e7e;border-top:2px solid #7e7e7e;border-right:1.2px solid #d4d4d4;border-bottom:1.2px solid #d4d4d4;box-shadow:1px 1px 0 #fff;"></div>
<div class="a" style="left:168px;top:203.8px;width:24.400000000000006px;height:16.5px;background:#efefef;border-right:1.4px solid #8a8a8a;border-bottom:1.4px solid #8a8a8a;border-left:1px solid #f8f8f8;border-top:1px solid #f8f8f8;"></div>
<svg class="a" style="left:175.7px;top:209.65px;" width="9" height="6" viewBox="0 0 9 6"><path d="M.6 .6 H8.4 L4.5 5Z" fill="#000"/></svg>
<svg class="a" style="left:53px;top:203px;" width="12" height="17" viewBox="0 0 12 17"><path d="M6 1.6 Q10.4 1.6 10.4 5.8 Q10.4 8 8.6 9.6 L8 13.4 Q8 15.4 6 15.4 Q4 15.4 4 13.4 L3.4 9.6 Q1.6 8 1.6 5.8 Q1.6 1.6 6 1.6Z" fill="#fff" stroke="#111" stroke-width="1.15"/>
<path d="M6 2.4 Q9.6 2.4 9.6 5.8 Q9.6 7.6 8 9 H4 Q2.4 7.6 2.4 5.8 Q2.4 2.4 6 2.4Z" fill="#eeee52"/>
<path d="M4.6 11.4 H7.6 M4.8 13.2 H7.4" stroke="#111" stroke-width=".8"/>
<circle cx="6" cy="5.6" r="5.6" fill="#f4f46a" opacity=".28"/></svg>
<svg class="a" style="left:72px;top:205px;" width="16" height="14" viewBox="0 0 16 14"><path d="M7.4 7 V4 Q7.4 1.4 10.4 1.4 Q13.4 1.4 13.4 4 V5.4" fill="none" stroke="#1a2a5e" stroke-width="1.5"/>
<rect x="1.6" y="7" width="8.2" height="5.6" fill="#1fdcf2" stroke="#0a1a3e" stroke-width="1.2"/></svg>
<span class="t" style="left:91.80px;top:203.51px;font-size:17px;line-height:17px;color:#000;transform:scaleX(0.9525);transform-origin:0 50%;">$$DEFAU</span>
<div class="a" style="left:198.5px;top:201.5px;width:1px;height:21px;background:#a6a6a6;"></div>
<div class="a" style="left:199.5px;top:201.5px;width:1px;height:21px;background:#fdfdfd;"></div>
<svg class="a" style="left:206px;top:203px;" width="18" height="18" viewBox="0 0 18 18"><defs><linearGradient id="al" x1="0" y1="0" x2="0" y2="1"><stop offset="0" stop-color="#cfe4fa"/><stop offset=".5" stop-color="#7fb2ea"/><stop offset="1" stop-color="#4a86d2"/></linearGradient></defs><path d="M1.2 9 L8 2.4 V6.2 H16.2 V11.8 H8 V15.6Z" fill="url(#al)" stroke="#3c6eb4" stroke-width=".9"/></svg>
<svg class="a" style="left:229px;top:203px;" width="18" height="18" viewBox="0 0 18 18"><defs><linearGradient id="ar" x1="0" y1="0" x2="0" y2="1"><stop offset="0" stop-color="#cfe4fa"/><stop offset=".5" stop-color="#7fb2ea"/><stop offset="1" stop-color="#4a86d2"/></linearGradient></defs><path d="M16.8 9 L10 2.4 V6.2 H1.8 V11.8 H10 V15.6Z" fill="url(#ar)" stroke="#3c6eb4" stroke-width=".9"/></svg>
<svg class="a" style="left:252px;top:203px;" width="19" height="18" viewBox="0 0 19 18"><g stroke="#4a78b8" stroke-width=".7"><path d="M12 1 L18 3.6 L12 6.2 L6 3.6Z" fill="#dcebfa"/><path d="M6 5.6 L12 8.2 L18 5.6 L18 6.6 L12 9.4 L6 6.6Z" fill="#a9c8ee"/><path d="M6 8.6 L12 11.2 L18 8.6 L18 9.6 L12 12.4 L6 9.6Z" fill="#8db4e6"/></g>
<path d="M1.4 15.6 L5 12.4 M5 12.4 H2.8 M5 12.4 V14.6 M6.4 15.6 L10 12.4 M10 12.4 H7.8 M10 12.4 V14.6" stroke="#222" stroke-width="1" fill="none"/></svg>
<svg class="a" style="left:275px;top:203px;" width="18" height="18" viewBox="0 0 18 18"><g fill="none" stroke="#a9a9a9" stroke-width="1.5"><path d="M14.6 2.4 Q9 1.4 8.6 6.4 V12"/><path d="M5.4 7 H12"/><path d="M2 16 V11.6 H16 V16Z M6.6 11.6 V16 M11.4 11.6 V16" stroke-width="1.3"/></g><path d="M5.4 8.6 L8.6 12.4 L11.8 8.6Z" fill="#a9a9a9"/></svg>
<div class="a" style="left:299px;top:201.5px;width:1px;height:21px;background:#a6a6a6;"></div>
<div class="a" style="left:300px;top:201.5px;width:1px;height:21px;background:#fdfdfd;"></div>
<div class="a" style="left:304.5px;top:202px;width:67.5px;height:19.5px;background:#fff;border-left:2px solid #7e7e7e;border-top:2px solid #7e7e7e;border-right:1.2px solid #d4d4d4;border-bottom:1.2px solid #d4d4d4;box-shadow:1px 1px 0 #fff;"></div>
<div class="a" style="left:355px;top:211px;width:15.6px;height:9.4px;background:#f4f4f4;border-right:1.6px solid #222;border-bottom:1.6px solid #222;"></div>
<svg class="a" style="left:358px;top:209.5px;" width="9" height="6" viewBox="0 0 9 6"><path d="M.6 .6 H8.4 L4.5 5Z" fill="#000"/></svg>
<span class="t" style="left:315.60px;top:204.65px;font-size:16.6px;line-height:16.6px;color:#0e1a30;transform:scaleX(0.9099);transform-origin:0 50%;">15</span>
<div class="a" style="left:377.5px;top:201.5px;width:1px;height:21px;background:#a6a6a6;"></div>
<div class="a" style="left:378.5px;top:201.5px;width:1px;height:21px;background:#fdfdfd;"></div>
<div class="a" style="left:382.5px;top:202px;width:57.0px;height:19.5px;background:#fff;border-left:2px solid #7e7e7e;border-top:2px solid #7e7e7e;border-right:1.2px solid #d4d4d4;border-bottom:1.2px solid #d4d4d4;box-shadow:1px 1px 0 #fff;"></div>
<div class="a" style="left:414.5px;top:203.8px;width:23.5px;height:16.5px;background:#efefef;border-right:1.4px solid #8a8a8a;border-bottom:1.4px solid #8a8a8a;border-left:1px solid #f8f8f8;border-top:1px solid #f8f8f8;"></div>
<svg class="a" style="left:421.75px;top:209.65px;" width="9" height="6" viewBox="0 0 9 6"><path d="M.6 .6 H8.4 L4.5 5Z" fill="#000"/></svg>
<svg class="a" style="left:388px;top:205px;" width="12" height="12" viewBox="0 0 12 12"><path d="M5.8 1.6 V10 M1.6 5.8 H10" stroke="#000" stroke-width="2"/></svg>
<div class="a" style="left:443px;top:202px;width:104.79999999999995px;height:19.5px;background:#fff;border-left:2px solid #7e7e7e;border-top:2px solid #7e7e7e;border-right:1.2px solid #d4d4d4;border-bottom:1.2px solid #d4d4d4;box-shadow:1px 1px 0 #fff;"></div>
<div class="a" style="left:522.5px;top:203.8px;width:23.799999999999955px;height:16.5px;background:#efefef;border-right:1.4px solid #8a8a8a;border-bottom:1.4px solid #8a8a8a;border-left:1px solid #f8f8f8;border-top:1px solid #f8f8f8;"></div>
<svg class="a" style="left:529.9px;top:209.65px;" width="9" height="6" viewBox="0 0 9 6"><path d="M.6 .6 H8.4 L4.5 5Z" fill="#000"/></svg>
<span class="t" style="left:482.60px;top:205.34px;font-size:17.2px;line-height:17.2px;color:#000;transform:scaleX(0.8372);transform-origin:0 50%;">!NON</span>
<div class="a" style="left:552.5px;top:201.5px;width:1px;height:21px;background:#a6a6a6;"></div>
<div class="a" style="left:553.5px;top:201.5px;width:1px;height:21px;background:#fdfdfd;"></div>
<div class="a" style="left:558.5px;top:202px;width:125.5px;height:19.5px;background:#fff;border-left:2px solid #7e7e7e;border-top:2px solid #7e7e7e;border-right:1.2px solid #d4d4d4;border-bottom:1.2px solid #d4d4d4;box-shadow:1px 1px 0 #fff;"></div>
<div class="a" style="left:658px;top:203.8px;width:24.5px;height:16.5px;background:#efefef;border-right:1.4px solid #8a8a8a;border-bottom:1.4px solid #8a8a8a;border-left:1px solid #f8f8f8;border-top:1px solid #f8f8f8;"></div>
<svg class="a" style="left:665.75px;top:209.65px;" width="9" height="6" viewBox="0 0 9 6"><path d="M.6 .6 H8.4 L4.5 5Z" fill="#000"/></svg>
<div class="a" style="left:562.7px;top:212px;width:44.5px;height:1.1px;background:#000;"></div>
<span class="t" style="left:607.20px;top:205.75px;font-size:16.6px;line-height:16.6px;color:#000;transform:scaleX(0.9197);transform-origin:0 50%;">solid</span>
<div class="a" style="left:686.8px;top:202px;width:66.70000000000005px;height:22px;background:#fff;border-left:2px solid #7e7e7e;border-top:2px solid #7e7e7e;border-right:1.2px solid #d4d4d4;border-bottom:1.2px solid #d4d4d4;box-shadow:1px 1px 0 #fff;"></div>
<div class="a" style="left:728.5px;top:203.8px;width:24px;height:19px;background:#efefef;"></div>
<svg class="a" style="left:733px;top:210.5px;" width="15" height="9" viewBox="0 0 15 9"><path d="M.8 .8 H14.2 L7.5 8.2Z" fill="#000"/></svg>
<span class="t" style="left:689.20px;top:205.66px;font-size:16.7px;line-height:16.7px;color:#000;transform:scaleX(0.8992);transform-origin:0 50%;">0.10 r</span>
<div class="a" style="left:726.2px;top:203.6px;width:2.3px;height:19.5px;background:#fff;"></div>
<div class="a" style="left:756.3px;top:202px;width:97.70000000000005px;height:19.5px;background:#fff;border-left:2px solid #7e7e7e;border-top:2px solid #7e7e7e;border-right:1.2px solid #d4d4d4;border-bottom:1.2px solid #d4d4d4;box-shadow:1px 1px 0 #fff;"></div>
<div class="a" style="left:827.8px;top:203.8px;width:24.700000000000045px;height:16.5px;background:#efefef;border-right:1.4px solid #8a8a8a;border-bottom:1.4px solid #8a8a8a;border-left:1px solid #f8f8f8;border-top:1px solid #f8f8f8;"></div>
<svg class="a" style="left:835.65px;top:209.65px;" width="9" height="6" viewBox="0 0 9 6"><path d="M.6 .6 H8.4 L4.5 5Z" fill="#000"/></svg>
<div class="a" style="left:861.5px;top:199px;width:1px;height:27px;background:#a9a9a9;"></div>
<div class="a" style="left:862.5px;top:199px;width:1px;height:27px;background:#fcfcfc;"></div>
<div class="a" style="left:866.2px;top:201.2px;width:2.2px;height:2.2px;background:#8c8e94;box-shadow:.8px .8px 0 #fff;"></div>
<div class="a" style="left:866.2px;top:206.2px;width:2.2px;height:2.2px;background:#8c8e94;box-shadow:.8px .8px 0 #fff;"></div>
<div class="a" style="left:866.2px;top:211.2px;width:2.2px;height:2.2px;background:#8c8e94;box-shadow:.8px .8px 0 #fff;"></div>
<div class="a" style="left:866.2px;top:216.2px;width:2.2px;height:2.2px;background:#8c8e94;box-shadow:.8px .8px 0 #fff;"></div>
<div class="a" style="left:866.2px;top:221.2px;width:2.2px;height:2.2px;background:#8c8e94;box-shadow:.8px .8px 0 #fff;"></div>
<svg class="a" style="left:873px;top:203px;" width="18" height="18" viewBox="0 0 18 18"><defs><linearGradient id="nd" x1="0" y1="0" x2="1" y2="1"><stop offset="0" stop-color="#f8fbf2"/><stop offset="1" stop-color="#d5e2c8"/></linearGradient></defs>
<path d="M3.6 2.4 H11.4 L15.6 6.6 V16.2 H3.6Z" fill="url(#nd)" stroke="#000" stroke-width="1.3"/>
<path d="M11.4 2.4 V6.6 H15.6" fill="#fff" stroke="#000" stroke-width="1.1"/>
<g stroke="#e6e63c" stroke-width="1.1"><path d="M4 .6 V7.4 M.6 4 H7.4 M1.6 1.6 L6.4 6.4 M6.4 1.6 L1.6 6.4"/></g>
<circle cx="4" cy="4" r="1.4" fill="#ffffa8"/></svg>
<svg class="a" style="left:896px;top:203px;" width="19" height="18" viewBox="0 0 19 18"><defs><linearGradient id="of1" x1="0" y1="0" x2="0" y2="1"><stop offset="0" stop-color="#f9d990"/><stop offset="1" stop-color="#e2a336"/></linearGradient></defs>
<path d="M1.6 15.4 V4.6 Q1.6 3.6 2.6 3.6 H6.2 L7.6 5.2 H13 Q14 5.2 14 6.2 V8" fill="#edc778" stroke="#b98a34" stroke-width=".8"/>
<path d="M1.6 15.6 L4.6 8 H17.4 L14.2 15.6Z" fill="url(#of1)" stroke="#a87422" stroke-width=".8"/>
<path d="M9.6 3.4 Q12.6 .6 15.4 3.6" fill="none" stroke="#6d7480" stroke-width="1.1"/><path d="M16.8 1.8 L16.2 5.4 L13.2 4.4Z" fill="#6d7480"/></svg>
<svg class="a" style="left:920px;top:203px;" width="17" height="18" viewBox="0 0 17 18"><path d="M1.4 2 H14.4 L15.4 3 V15.6 H1.4Z" fill="#0a0a0a"/>
<rect x="4" y="2.8" width="8.6" height="6" fill="#dfe3d6"/><rect x="4" y="2.8" width="8.6" height="1" fill="#f6f7f0"/>
<rect x="4.4" y="10.6" width="8" height="5" fill="#141414"/><rect x="10" y="11.4" width="2" height="3.4" fill="#f2f2f2"/>
<rect x="13.4" y="3" width="1" height="1.2" fill="#d8d8d8"/></svg>
<div class="a" style="left:943px;top:201.5px;width:1px;height:21px;background:#a6a6a6;"></div>
<div class="a" style="left:944px;top:201.5px;width:1px;height:21px;background:#fdfdfd;"></div>
<svg class="a" style="left:950px;top:203px;" width="18" height="18" viewBox="0 0 18 18"><defs><linearGradient id="pr1" x1="0" y1="0" x2="0" y2="1"><stop offset="0" stop-color="#f2f6fa"/><stop offset="1" stop-color="#aebccc"/></linearGradient></defs>
<path d="M5.6 2 L13.8 2.6 L12.4 8 L4.4 7.6Z" fill="#fbfcfd" stroke="#7b8896" stroke-width=".7"/>
<path d="M6.6 3.8 L12.2 4.2 M6.2 5.6 L11.8 6" stroke="#a9b4c0" stroke-width=".7"/>
<path d="M1.8 9 L4.4 7 L13.4 7.6 L16 9.4 V14 L14.6 16 H3 L1.8 14.2Z" fill="url(#pr1)" stroke="#4f6278" stroke-width=".8"/>
<path d="M2 11 H15.8" stroke="#6f8196" stroke-width=".7"/>
<rect x="10.4" y="11.6" width="4" height="2.6" fill="#26a63a"/><rect x="11.6" y="12.2" width="1.4" height="1.2" fill="#9df0a6"/>
<path d="M3 15.4 H14.6" stroke="#45566a" stroke-width="1.2"/></svg>
<div class="a" style="left:974px;top:201.5px;width:1px;height:21px;background:#a6a6a6;"></div>
<div class="a" style="left:975px;top:201.5px;width:1px;height:21px;background:#fdfdfd;"></div>
<svg class="a" style="left:983px;top:203.5px;" width="13" height="17" viewBox="0 0 13 17"><path d="M4 1.6 L7.8 10 M9.6 1.6 L5.6 10" stroke="#a2a2a2" stroke-width="1.2" fill="none"/>
<ellipse cx="3.6" cy="12.8" rx="2.2" ry="2.8" fill="none" stroke="#a2a2a2" stroke-width="1.2"/><ellipse cx="9.6" cy="12.6" rx="2.2" ry="2.8" fill="none" stroke="#a2a2a2" stroke-width="1.2"/></svg>
<svg class="a" style="left:1005px;top:203px;" width="17" height="16" viewBox="0 0 17 16"><g fill="#f4f4f4" stroke="#a2a2a2" stroke-width="1.1"><path d="M1.6 1.4 H6.4 L8.6 3.6 V9.6 H1.6Z"/><path d="M8 5.6 H12.8 L15.4 8.2 V14.4 H8Z"/></g>
<g stroke="#a2a2a2" stroke-width=".9"><path d="M3 4.2 H6 M3 6 H6.6 M3 7.8 H6.6 M9.6 9.2 H13.6 M9.6 11 H13.6 M9.6 12.8 H13.6"/></g></svg>
<svg class="a" style="left:1028px;top:203px;" width="17" height="17" viewBox="0 0 17 17"><path d="M1.4 3.2 H5 Q5.6 1 8 1 Q10.4 1 11 3.2 H14.4 V14.8 H1.4Z" fill="#a2a2a2"/>
<path d="M6 3.4 Q6.4 2.2 8 2.2 Q9.6 2.2 10 3.4Z" fill="#f2f2f2"/>
<rect x="7.4" y="8" width="8" height="7.2" fill="#f4f4f4" stroke="#a2a2a2" stroke-width="1"/><path d="M9 10.4 H12 M9 12.6 H13.8" stroke="#a2a2a2" stroke-width="1"/></svg>
<svg class="a" style="left:1052px;top:203.5px;" width="15" height="16" viewBox="0 0 15 16"><path d="M1.6 2 L13 13.6 M13 1.8 L2 13.8" stroke="#a2a2a2" stroke-width="2" fill="none"/><path d="M1.8 13.2 L3.6 14.6" stroke="#a2a2a2" stroke-width="2.4"/></svg>
<svg class="a" style="left:1074px;top:203px;" width="17" height="17" viewBox="0 0 17 17"><path d="M4.4 7 Q6 2.6 10 3 Q13.4 3.6 12.6 7.2 Q12 9.4 9.6 9.8" fill="none" stroke="#a2a2a2" stroke-width="1.4"/><path d="M1.6 3.4 L6.6 4.6 L3 8.8Z" fill="#a2a2a2"/><path d="M15.4 11.4 V15.2 H11.6Z" fill="#a2a2a2"/></svg>
<svg class="a" style="left:1097px;top:203px;" width="17" height="17" viewBox="0 0 17 17"><path d="M11.6 7 Q10 2.6 6 3 Q2.6 3.6 3.4 7.2 Q4 9.4 6.4 9.8" fill="none" stroke="#a2a2a2" stroke-width="1.4"/><path d="M14.4 3.4 L9.4 4.6 L13 8.8Z" fill="#a2a2a2"/><path d="M15.8 11.4 V15.2 H12Z" fill="#a2a2a2"/></svg>
<svg class="a" style="left:1119.5px;top:204px;" width="18" height="16" viewBox="0 0 18 16"><path d="M9.4 9.2 H5 Q1.4 9.2 1.4 6 Q1.4 2.8 5 2.8 H11.8 Q15.4 2.8 15.4 6 Q15.4 8.6 13 9.2" fill="none" stroke="#1c4fc8" stroke-width="1.5"/>
<path d="M7.4 9.4 L11.8 6.2 V12.6Z" fill="#1c4fc8"/><path d="M17 11 V15.4 H12.6Z" fill="#000"/></svg>
<div class="a" style="left:1143px;top:201.5px;width:1px;height:21px;background:#a6a6a6;"></div>
<div class="a" style="left:1144px;top:201.5px;width:1px;height:21px;background:#fdfdfd;"></div>
<svg class="a" style="left:1150px;top:203px;" width="18" height="18" viewBox="0 0 18 18"><g stroke="#6a6a6a" stroke-width="1.3" fill="none"><path d="M9 1.6 V16 M1.6 8.8 H16.4"/><path d="M6.4 4.2 L9 1.4 L11.6 4.2 M6.4 13.4 L9 16.2 L11.6 13.4 M4.2 6.2 L1.4 8.8 L4.2 11.4 M13.8 6.2 L16.6 8.8 L13.8 11.4"/></g></svg>
<svg class="a" style="left:1174.1000000000001px;top:203.6px;" width="18" height="18" viewBox="0 0 18 18"><defs><radialGradient id="l1" cx="40%" cy="35%" r="70%"><stop offset="0" stop-color="#fdfdfd"/><stop offset="1" stop-color="#d4d4d4"/></radialGradient></defs>
<path d="M10 11 L15.2 16.2" stroke="#8a4e22" stroke-width="2.2" stroke-linecap="round"/><path d="M10.4 10.6 L15.4 15.6" stroke="#d9a676" stroke-width=".7"/>
<circle cx="6.6" cy="6.8" r="5.1" fill="url(#l1)" stroke="#111" stroke-width="1.2"/></svg>
<svg class="a" style="left:1197.3000000000002px;top:203.6px;" width="18" height="18" viewBox="0 0 18 18"><defs><radialGradient id="l2" cx="40%" cy="35%" r="70%"><stop offset="0" stop-color="#fdfdfd"/><stop offset="1" stop-color="#d4dcea"/></radialGradient></defs>
<path d="M10 11 L15.2 16.2" stroke="#8a4e22" stroke-width="2.2" stroke-linecap="round"/><path d="M10.4 10.6 L15.4 15.6" stroke="#d9a676" stroke-width=".7"/>
<circle cx="6.6" cy="6.8" r="5.1" fill="url(#l2)" stroke="#111" stroke-width="1.2"/><rect x="1.6" y="3.4" width="11.4" height="6.8" fill="#e8eef8" fill-opacity=".6" stroke="#1c4fc8" stroke-width="1.1"/><path d="M11 1.2 V5 M9 3 H14.8" stroke="#1c4fc8" stroke-width="1.1"/></svg>
<svg class="a" style="left:1220.1000000000001px;top:203.6px;" width="18" height="18" viewBox="0 0 18 18"><defs><radialGradient id="l3" cx="40%" cy="35%" r="70%"><stop offset="0" stop-color="#fdfdfd"/><stop offset="1" stop-color="#cfd8ea"/></radialGradient></defs>
<path d="M10 11 L15.2 16.2" stroke="#8a4e22" stroke-width="2.2" stroke-linecap="round"/><path d="M10.4 10.6 L15.4 15.6" stroke="#d9a676" stroke-width=".7"/>
<circle cx="6.6" cy="6.8" r="5.1" fill="url(#l3)" stroke="#111" stroke-width="1.2"/><rect x="2.8" y="3.2" width="7.4" height="7" fill="#dfe8f6" fill-opacity=".7" stroke="#1c4fc8" stroke-width="1.1"/></svg>
<svg class="a" style="left:1242.9px;top:203.6px;" width="18" height="18" viewBox="0 0 18 18"><defs><radialGradient id="l4" cx="40%" cy="35%" r="70%"><stop offset="0" stop-color="#fdfdfd"/><stop offset="1" stop-color="#d4dcea"/></radialGradient></defs>
<path d="M10 11 L15.2 16.2" stroke="#8a4e22" stroke-width="2.2" stroke-linecap="round"/><path d="M10.4 10.6 L15.4 15.6" stroke="#d9a676" stroke-width=".7"/>
<circle cx="6.6" cy="6.8" r="5.1" fill="url(#l4)" stroke="#111" stroke-width="1.2"/><path d="M6.6 3.8 V9.8 M3.6 6.8 H9.6" stroke="#1c4fc8" stroke-width="1.3"/></svg>
<svg class="a" style="left:1266.1000000000001px;top:203.6px;" width="18" height="18" viewBox="0 0 18 18"><defs><radialGradient id="l5" cx="40%" cy="35%" r="70%"><stop offset="0" stop-color="#fdfdfd"/><stop offset="1" stop-color="#d4dcea"/></radialGradient></defs>
<path d="M10 11 L15.2 16.2" stroke="#8a4e22" stroke-width="2.2" stroke-linecap="round"/><path d="M10.4 10.6 L15.4 15.6" stroke="#d9a676" stroke-width=".7"/>
<circle cx="6.6" cy="6.8" r="5.1" fill="url(#l5)" stroke="#111" stroke-width="1.2"/><path d="M3.6 6.8 H9.6" stroke="#1c4fc8" stroke-width="1.3"/></svg>
<svg class="a" style="left:1288.9px;top:203.6px;" width="18" height="18" viewBox="0 0 18 18"><defs><radialGradient id="l6" cx="40%" cy="35%" r="70%"><stop offset="0" stop-color="#fdfdfd"/><stop offset="1" stop-color="#e6d4d4"/></radialGradient></defs>
<path d="M10 11 L15.2 16.2" stroke="#8a4e22" stroke-width="2.2" stroke-linecap="round"/><path d="M10.4 10.6 L15.4 15.6" stroke="#d9a676" stroke-width=".7"/>
<circle cx="6.6" cy="6.8" r="5.1" fill="url(#l6)" stroke="#111" stroke-width="1.2"/><circle cx="6.6" cy="6.8" r="2.5" fill="#b81e2a"/></svg>
<svg class="a" style="left:1312.2px;top:203.6px;" width="18" height="18" viewBox="0 0 18 18"><defs><radialGradient id="l7" cx="40%" cy="35%" r="70%"><stop offset="0" stop-color="#fdfdfd"/><stop offset="1" stop-color="#cfdcf0"/></radialGradient></defs>
<path d="M10 11 L15.2 16.2" stroke="#8a4e22" stroke-width="2.2" stroke-linecap="round"/><path d="M10.4 10.6 L15.4 15.6" stroke="#d9a676" stroke-width=".7"/>
<circle cx="6.6" cy="6.8" r="5.1" fill="url(#l7)" stroke="#111" stroke-width="1.2"/><path d="M3.4 6.8 H12 M3.4 6.8 L6.4 4.2 M3.4 6.8 L6.4 9.4" stroke="#1c4fc8" stroke-width="1.4" fill="none"/><circle cx="11.8" cy="7.2" r="1.6" fill="none" stroke="#1c4fc8" stroke-width=".8"/></svg>
<div class="a" style="left:1335px;top:203px;width:1px;height:19px;background:#a6a6a6;"></div>
<div class="a" style="left:1336px;top:203px;width:1px;height:19px;background:#fdfdfd;"></div>
<svg class="a" style="left:1342px;top:203px;" width="18" height="18" viewBox="0 0 18 18"><path d="M2 12.8 L3.6 13.2 L5 14.8 L7.4 15.2" fill="none" stroke="#000" stroke-width="1.1"/><path d="M8.6 15.6 H13" stroke="#b4b4b4" stroke-width="1"/><path d="M7.4 15.4 l1.2 -5.2 l5 -8.4 l2.8 1.2 l-4.6 8.8Z" fill="#e8b830" stroke="#000" stroke-width="1" stroke-dasharray="2 .7"/><path d="M7.4 15.4 l.5 -2.4 l1.7 1.2Z" fill="#000"/><path d="M9.8 10.4 l4 -7" stroke="#fbe9a0" stroke-width=".9"/></svg>
<svg class="a" style="left:1365px;top:203px;" width="18" height="18" viewBox="0 0 18 18"><path d="M5.2 1.6 H12.8 L16.4 5.2 V15.4 H4.4" fill="#f6f6f6" stroke="#000" stroke-width="1.2"/><path d="M12.8 1.6 V5.2 H16.4" fill="#fff" stroke="#000" stroke-width=".9"/>
<path d="M9.6 12 H12.8" stroke="#000" stroke-width="1.1"/><path d="M7.4 13 H9" stroke="#aaa" stroke-width="1"/><path d="M1 15.4 H5" stroke="#000" stroke-width="1.1"/><path d="M3 15.4 l1.2 -5.2 l5 -8.4 l2.8 1.2 l-4.6 8.8Z" fill="#e8b830" stroke="#000" stroke-width="1" stroke-dasharray="2 .7"/><path d="M3 15.4 l.5 -2.4 l1.7 1.2Z" fill="#000"/><path d="M5.4 10.4 l4 -7" stroke="#fbe9a0" stroke-width=".9"/></svg>
<div class="a" style="left:1386px;top:201.4px;width:22px;height:21.599999999999994px;background:#f6f5f6;border-left:1.2px solid #9c9c9c;border-top:1.2px solid #9c9c9c;border-right:1.2px solid #fff;border-bottom:1.2px solid #fff;"></div>
<svg class="a" style="left:1390px;top:204.6px;" width="17" height="16" viewBox="0 0 17 16"><path d="M1.2 1.2 H6.4 V10.2 H15.4 V15 H1.2Z" fill="#050505"/>
<g stroke="#fff" stroke-width=".8"><path d="M1.2 3.4 H3.2 M1.2 5.4 H3.2 M1.2 7.4 H3.2 M1.2 9.4 H3.2 M1.2 11.4 H3.2 M4 15 V13 M6 15 V13 M8 15 V13 M10 15 V13 M12 15 V13 M14 15 V13"/></g></svg>
<div class="a" style="left:1415px;top:199px;width:1px;height:27.5px;background:#a9a9a9;"></div>
<div class="a" style="left:1416px;top:199px;width:1px;height:27.5px;background:#fcfcfc;"></div>
<div class="a" style="left:18.2px;top:231.7px;width:2.2px;height:2.2px;background:#8c8e94;box-shadow:.8px .8px 0 #fff;"></div>
<div class="a" style="left:18.2px;top:236.7px;width:2.2px;height:2.2px;background:#8c8e94;box-shadow:.8px .8px 0 #fff;"></div>
<div class="a" style="left:18.2px;top:241.7px;width:2.2px;height:2.2px;background:#8c8e94;box-shadow:.8px .8px 0 #fff;"></div>
<div class="a" style="left:18.2px;top:246.7px;width:2.2px;height:2.2px;background:#8c8e94;box-shadow:.8px .8px 0 #fff;"></div>
<div class="a" style="left:18.2px;top:251.7px;width:2.2px;height:2.2px;background:#8c8e94;box-shadow:.8px .8px 0 #fff;"></div>
<div class="a" style="left:23px;top:232.3px;width:22.299999999999997px;height:21.69999999999999px;background:#f6f5f6;border-left:1.2px solid #9c9c9c;border-top:1.2px solid #9c9c9c;border-right:1.2px solid #fff;border-bottom:1.2px solid #fff;"></div>
<svg class="a" style="left:18px;top:228px;" width="196" height="30" viewBox="0 0 196 30"><circle cx="16.9" cy="15.9" r="3.7" fill="#fbd6d8" stroke="#8e1c2c" stroke-width="1.3"/><path d="M33.6 20.4 L43.6 9.5" stroke="#3f3f46" stroke-width="1.1"/><circle cx="33.6" cy="20.400000000000006" r="2.2" fill="#fbd6d8" stroke="#8e1c2c" stroke-width="1.1"/><circle cx="43.6" cy="9.5" r="2.2" fill="#fbd6d8" stroke="#8e1c2c" stroke-width="1.1"/><path d="M56.0 8.2 L69.0 22.0 M69.0 8.4 L56.0 22.0" stroke="#3f3f46" stroke-width="1.1"/><circle cx="62.5" cy="15.5" r="2.2" fill="#fbd6d8" stroke="#8e1c2c" stroke-width="1.1"/><path d="M77.1 22.5 L92.8 7.4" stroke="#3f3f46" stroke-width="1.1"/><circle cx="84.4" cy="14.5" r="2.2" fill="#fbd6d8" stroke="#8e1c2c" stroke-width="1.1"/><path d="M103.2 22.0 A8 8 0 1 1 115.6 12.0" fill="none" stroke="#8a8a8a" stroke-width="1.3"/><circle cx="108.4" cy="16.599999999999994" r="1.9" fill="#fbd6d8" stroke="#8e1c2c" stroke-width="1.1"/><path d="M123.0 22.5 L132.6 13.6 L126.0 7.5 M132.6 13.6 L139.0 19.5" fill="none" stroke="#3f3f46" stroke-width="1.1"/><circle cx="132.6" cy="13.599999999999994" r="2.2" fill="#fbd6d8" stroke="#8e1c2c" stroke-width="1.1"/><path d="M145.9 10.5 L158.9 22.8 M162.0 7.4 L153.2 15.7" stroke="#3f3f46" stroke-width="1.1"/><path d="M156.3 14.6 L159.0 17.3 L156.3 20.0 L153.6 17.3Z" fill="#fbd6d8" stroke="#8e1c2c" stroke-width="1"/><path d="M170.9 7.0 V22 M176.4 7.0 V22 M182.4 7.0 V22 M169.4 8.4 H184 M169.4 14.5 H184 M169.4 20.4 H184" stroke="#5a5a62" stroke-width="1" fill="none"/><circle cx="176.4" cy="14.5" r="2.2" fill="#fbd6d8" stroke="#8e1c2c" stroke-width="1.1"/></svg>
<div class="a" style="left:212.4px;top:229px;width:1px;height:27px;background:#a9a9a9;"></div>
<div class="a" style="left:213.4px;top:229px;width:1px;height:27px;background:#fcfcfc;"></div>
<div class="a" style="left:216px;top:231.7px;width:2.2px;height:2.2px;background:#8c8e94;box-shadow:.8px .8px 0 #fff;"></div>
<div class="a" style="left:216px;top:236.7px;width:2.2px;height:2.2px;background:#8c8e94;box-shadow:.8px .8px 0 #fff;"></div>
<div class="a" style="left:216px;top:241.7px;width:2.2px;height:2.2px;background:#8c8e94;box-shadow:.8px .8px 0 #fff;"></div>
<div class="a" style="left:216px;top:246.7px;width:2.2px;height:2.2px;background:#8c8e94;box-shadow:.8px .8px 0 #fff;"></div>
<div class="a" style="left:216px;top:251.7px;width:2.2px;height:2.2px;background:#8c8e94;box-shadow:.8px .8px 0 #fff;"></div>
<svg class="a" style="left:224px;top:235.6px;" width="16" height="15" viewBox="0 0 16 15"><defs><linearGradient id="sky" x1="0" y1="0" x2="0" y2="1"><stop offset="0" stop-color="#7cb6ee"/><stop offset="1" stop-color="#e6f0c8"/></linearGradient></defs>
<rect x="0" y="0" width="15.4" height="14.4" fill="url(#sky)"/>
<path d="M0 7 L4 4.4 L9 5.4 L15.4 9.4 V14.4 H0Z" fill="#a87432"/><path d="M0 7 L4 4.4 L6.4 5 L3 14.4 H0Z" fill="#8a5a22"/>
<path d="M5.6 14.4 L10 8.6 L15.4 8.4 V14.4Z" fill="#2f9a2c"/><path d="M12 14.4 L15.4 11 V14.4Z" fill="#000"/></svg>
<svg class="a" style="left:248px;top:233px;" width="16" height="20" viewBox="0 0 16 20"><path d="M3.6 12.8 L4.6 5 L6.8 2.4 L11.4 2.2 L11.2 3.8 L6.6 10.4Z" fill="#000"/><path d="M5.6 9.6 L6.4 5 L8.4 2.8 L10.2 2.8 L9.6 4.8Z" fill="#f0c23a"/><path d="M7 7 L9.6 3.4" stroke="#fbe08a" stroke-width=".9"/><g fill="none" stroke="#2828d2" stroke-width="1.15" stroke-linecap="square"><path d="M1.6 18 V14 l1.6 2.7 l1.6 -2.7 V18"/><path d="M9.799999999999999 14 h-2.6 V18 h2.6 v-2.2 h-1.2"/><path d="M11.6 18 V14 h2.2 v2.2 h-2.2 l2.4 2.4"/></g></svg>
<svg class="a" style="left:269px;top:234px;" width="18" height="18" viewBox="0 0 18 18"><path d="M8.8 1 L16.4 8.6 L8.8 16.2 L1.2 8.6Z" fill="#f2c218" stroke="#111" stroke-width="1.2"/>
<path d="M8.8 3.8 L10.8 6 H9.6 Q10.8 7.4 9.2 8.6 Q7.6 9.8 9 11 Q10.2 12 9 13.4" fill="none" stroke="#111" stroke-width="1.2"/><path d="M8.8 3.4 L10.8 5.8 H6.8Z" fill="#111"/></svg>
<svg class="a" style="left:292px;top:234px;" width="18" height="18" viewBox="0 0 18 18"><g fill="none" stroke="#111" stroke-width="1.1"><path d="M2.6 12 H8 L12 14.6 M8 12 L6.4 7.6 L8.8 3 M8 12 L13.4 7.4 L13.6 5"/></g>
<g fill="#fff" stroke="#111" stroke-width=".9"><circle cx="2.4" cy="12" r="1.2"/><circle cx="9" cy="2.6" r="1.2"/><circle cx="13.8" cy="4.2" r="1.2"/><circle cx="6.2" cy="7.4" r="1"/></g>
<path d="M16.6 12.4 V17 H12Z" fill="#000"/></svg>
<svg class="a" style="left:316px;top:234.6px;" width="17" height="17" viewBox="0 0 17 17"><g fill="#c9cfa6" stroke="#9aa37c" stroke-width=".8" opacity=".9"><path d="M1 1 H6.4 V3.6 Q3.6 3.6 3.6 6.4 H1Z"/><path d="M15.6 1 H10.2 V3.6 Q13 3.6 13 6.4 H15.6Z"/><path d="M1 15.6 H6.4 V13 Q3.6 13 3.6 10.2 H1Z"/><path d="M15.6 15.6 H10.2 V13 Q13 13 13 10.2 H15.6Z"/></g>
<g stroke="#8f8f86" stroke-width="1" fill="none" opacity=".75"><path d="M5.4 1.4 V5.4 H1.4 M11.2 1.4 V5.4 H15.2 M5.4 15.2 V11.2 H1.4 M11.2 15.2 V11.2 H15.2"/></g></svg>
<svg class="a" style="left:339px;top:233.4px;" width="18" height="20" viewBox="0 0 18 20"><rect x="1.2" y="1.4" width="7.6" height="9.2" fill="#e8c24a" stroke="#6a5a2a" stroke-width=".9"/><rect x="1.2" y="1.4" width="7.6" height="2.2" fill="#2a4a8a"/>
<path d="M8 9.6 L12 5.4" stroke="#a85a2a" stroke-width="1.6"/><circle cx="13.4" cy="4.2" r="2.6" fill="#f8f8f8" stroke="#8a8a8a" stroke-width="1"/><g fill="none" stroke="#2828d2" stroke-width="1.15" stroke-linecap="square"><path d="M1.6 17.6 V13.6 l1.6 2.7 l1.6 -2.7 V17.6"/><path d="M9.799999999999999 13.6 h-2.6 V17.6 h2.6 v-2.2 h-1.2"/><path d="M11.6 17.6 V13.6 h2.2 v2.2 h-2.2 l2.4 2.4"/></g></svg>
<svg class="a" style="left:361px;top:234px;" width="18" height="18" viewBox="0 0 18 18"><path d="M1.6 14.6 L5.2 11.4 L16 2.4 M5.2 11.4 L6 6 M5.2 11.4 L14.6 15.4" fill="none" stroke="#111" stroke-width="1.2"/>
<rect x="14.6" y="1.2" width="2.6" height="2.6" fill="#fff" stroke="#111" stroke-width=".9"/><rect x="4.6" y="4" width="2.6" height="2.6" fill="#fff" stroke="#111" stroke-width=".9"/><rect x="4" y="10.2" width="2.4" height="2.4" fill="#fff" stroke="#111" stroke-width=".9"/>
<path d="M17 13.6 V17 H13Z M12.6 13.4 L16.8 16 L14.4 16.6Z" fill="#000"/></svg>
<div class="a" style="left:388.4px;top:229px;width:1px;height:27px;background:#a9a9a9;"></div>
<div class="a" style="left:389.4px;top:229px;width:1px;height:27px;background:#fcfcfc;"></div>
<div class="a" style="left:392px;top:231.7px;width:2.2px;height:2.2px;background:#8c8e94;box-shadow:.8px .8px 0 #fff;"></div>
<div class="a" style="left:392px;top:236.7px;width:2.2px;height:2.2px;background:#8c8e94;box-shadow:.8px .8px 0 #fff;"></div>
<div class="a" style="left:392px;top:241.7px;width:2.2px;height:2.2px;background:#8c8e94;box-shadow:.8px .8px 0 #fff;"></div>
<div class="a" style="left:392px;top:246.7px;width:2.2px;height:2.2px;background:#8c8e94;box-shadow:.8px .8px 0 #fff;"></div>
<div class="a" style="left:392px;top:251.7px;width:2.2px;height:2.2px;background:#8c8e94;box-shadow:.8px .8px 0 #fff;"></div>
<svg class="a" style="left:399.4px;top:234px;" width="17" height="17" viewBox="0 0 17 17"><circle cx="8.3" cy="8.4" r="7.2" fill="#fdeeee" stroke="#5c4a4c" stroke-width="1.2"/>
<g stroke="#d8404a" stroke-width="1"><path d="M8.3 1.6 V15.2 M1.5 8.4 H15.1 M3.5 3.6 L13.1 13.2 M13.1 3.6 L3.5 13.2"/></g><circle cx="8.3" cy="8.4" r="2.7" fill="#c4161e"/></svg>
<div class="a" style="left:420.2px;top:232.3px;width:21.600000000000023px;height:21.69999999999999px;background:#f6f5f6;border-left:1.2px solid #9c9c9c;border-top:1.2px solid #9c9c9c;border-right:1.2px solid #fff;border-bottom:1.2px solid #fff;"></div>
<svg class="a" style="left:422px;top:234.6px;" width="20" height="18" viewBox="0 0 20 18"><path d="M4.4 3 V14.8 H17.4 M2.2 5.2 L4.4 2.8 L6.6 5.2 M15.2 12.6 L17.6 14.8 L15.2 17" fill="none" stroke="#333" stroke-width="1.1"/><circle cx="10.5" cy="8.9" r="2.5" fill="#c4161e"/></svg>
<svg class="a" style="left:446px;top:234px;" width="17" height="18" viewBox="0 0 17 18"><defs><radialGradient id="gl" cx="40%" cy="35%" r="70%"><stop offset="0" stop-color="#8fd08a"/><stop offset=".5" stop-color="#4a9a8a"/><stop offset="1" stop-color="#3a6ab8"/></radialGradient></defs>
<circle cx="7" cy="7.6" r="6" fill="url(#gl)"/><path d="M4 4 Q6 2 8.6 3.4 Q7.6 6 5 6.4Z" fill="#9ee07a" opacity=".8"/>
<rect x="4.2" y="10.4" width="10.6" height="6.4" fill="#fff" stroke="#000" stroke-width="1.5"/><path d="M6 12.6 H13 M6 14.6 H13" stroke="#333" stroke-width="1" stroke-dasharray="1.6 .8"/></svg>
<div class="a" style="left:466.1px;top:232.3px;width:21.899999999999977px;height:21.69999999999999px;background:#f6f5f6;border-left:1.2px solid #9c9c9c;border-top:1.2px solid #9c9c9c;border-right:1.2px solid #fff;border-bottom:1.2px solid #fff;"></div>
<svg class="a" style="left:472px;top:238px;" width="14" height="15" viewBox="0 0 14 15"><circle cx="6.3" cy="5.2" r="2.5" fill="#b0101a"/><path d="M2.6 9.2 L6 12.6 L11.6 6.2" fill="none" stroke="#d82a32" stroke-width="1.5"/><path d="M3.4 10.8 L6 13.2 L8 11.2" fill="#d82a32"/></svg>
<div class="a" style="left:495px;top:229px;width:1px;height:27px;background:#a9a9a9;"></div>
<div class="a" style="left:496px;top:229px;width:1px;height:27px;background:#fcfcfc;"></div>
<div class="a" style="left:17px;top:258px;width:1902px;height:1.6px;background:linear-gradient(#9a9a9a,#7d7d7d);"></div>
<div class="a" style="left:41px;top:259.5px;width:1878px;height:717.5px;background:#fefeff;"></div>
<div class="a" style="left:17px;top:259.5px;width:2px;height:717.5px;background:linear-gradient(90deg,#8fb0e8,#dfe6f2);"></div>
<div class="a" style="left:19px;top:259.5px;width:20.5px;height:717.5px;background:#f1eff1;"></div>
<div class="a" style="left:39.3px;top:259.5px;width:1.9px;height:717.5px;background:#a3a3a3;"></div>
<svg class="a" style="left:17px;top:259.5px;" width="24" height="717.5" viewBox="0 0 24 717.5"><rect x="16.2" y="5.90" width="5.4" height="1.2" fill="#111"/><rect x="16.2" y="13.48" width="5.4" height="1.2" fill="#111"/><rect x="16.2" y="21.05" width="5.4" height="1.2" fill="#111"/><rect x="16.2" y="28.63" width="5.4" height="1.2" fill="#111"/><rect x="2" y="36.20" width="20" height="1.2" fill="#111"/><rect x="16.2" y="43.77" width="5.4" height="1.2" fill="#111"/><rect x="16.2" y="51.35" width="5.4" height="1.2" fill="#111"/><rect x="16.2" y="58.92" width="5.4" height="1.2" fill="#111"/><rect x="16.2" y="66.50" width="5.4" height="1.2" fill="#111"/><rect x="16.2" y="74.07" width="5.4" height="1.2" fill="#111"/><rect x="16.2" y="81.64" width="5.4" height="1.2" fill="#111"/><rect x="16.2" y="89.22" width="5.4" height="1.2" fill="#111"/><rect x="16.2" y="96.79" width="5.4" height="1.2" fill="#111"/><rect x="16.2" y="104.37" width="5.4" height="1.2" fill="#111"/><rect x="2" y="111.94" width="20" height="1.2" fill="#111"/><rect x="16.2" y="119.51" width="5.4" height="1.2" fill="#111"/><rect x="16.2" y="127.09" width="5.4" height="1.2" fill="#111"/><rect x="16.2" y="134.66" width="5.4" height="1.2" fill="#111"/><rect x="16.2" y="142.24" width="5.4" height="1.2" fill="#111"/><rect x="16.2" y="149.81" width="5.4" height="1.2" fill="#111"/><rect x="16.2" y="157.38" width="5.4" height="1.2" fill="#111"/><rect x="16.2" y="164.96" width="5.4" height="1.2" fill="#111"/><rect x="16.2" y="172.53" width="5.4" height="1.2" fill="#111"/><rect x="16.2" y="180.11" width="5.4" height="1.2" fill="#111"/><rect x="2" y="187.68" width="20" height="1.2" fill="#111"/><rect x="16.2" y="195.25" width="5.4" height="1.2" fill="#111"/><rect x="16.2" y="202.83" width="5.4" height="1.2" fill="#111"/><rect x="16.2" y="210.40" width="5.4" height="1.2" fill="#111"/><rect x="16.2" y="217.98" width="5.4" height="1.2" fill="#111"/><rect x="16.2" y="225.55" width="5.4" height="1.2" fill="#111"/><rect x="16.2" y="233.12" width="5.4" height="1.2" fill="#111"/><rect x="16.2" y="240.70" width="5.4" height="1.2" fill="#111"/><rect x="16.2" y="248.27" width="5.4" height="1.2" fill="#111"/><rect x="16.2" y="255.85" width="5.4" height="1.2" fill="#111"/><rect x="2" y="263.42" width="20" height="1.2" fill="#111"/><rect x="16.2" y="270.99" width="5.4" height="1.2" fill="#111"/><rect x="16.2" y="278.57" width="5.4" height="1.2" fill="#111"/><rect x="16.2" y="286.14" width="5.4" height="1.2" fill="#111"/><rect x="16.2" y="293.72" width="5.4" height="1.2" fill="#111"/><rect x="16.2" y="301.29" width="5.4" height="1.2" fill="#111"/><rect x="16.2" y="308.86" width="5.4" height="1.2" fill="#111"/><rect x="16.2" y="316.44" width="5.4" height="1.2" fill="#111"/><rect x="16.2" y="324.01" width="5.4" height="1.2" fill="#111"/><rect x="16.2" y="331.59" width="5.4" height="1.2" fill="#111"/><rect x="2" y="339.16" width="20" height="1.2" fill="#111"/><rect x="16.2" y="346.73" width="5.4" height="1.2" fill="#111"/><rect x="16.2" y="354.31" width="5.4" height="1.2" fill="#111"/><rect x="16.2" y="361.88" width="5.4" height="1.2" fill="#111"/><rect x="16.2" y="369.46" width="5.4" height="1.2" fill="#111"/><rect x="16.2" y="377.03" width="5.4" height="1.2" fill="#111"/><rect x="16.2" y="384.60" width="5.4" height="1.2" fill="#111"/><rect x="16.2" y="392.18" width="5.4" height="1.2" fill="#111"/><rect x="16.2" y="399.75" width="5.4" height="1.2" fill="#111"/><rect x="16.2" y="407.33" width="5.4" height="1.2" fill="#111"/><rect x="2" y="414.90" width="20" height="1.2" fill="#111"/><rect x="16.2" y="422.47" width="5.4" height="1.2" fill="#111"/><rect x="16.2" y="430.05" width="5.4" height="1.2" fill="#111"/><rect x="16.2" y="437.62" width="5.4" height="1.2" fill="#111"/><rect x="16.2" y="445.20" width="5.4" height="1.2" fill="#111"/><rect x="16.2" y="452.77" width="5.4" height="1.2" fill="#111"/><rect x="16.2" y="460.34" width="5.4" height="1.2" fill="#111"/><rect x="16.2" y="467.92" width="5.4" height="1.2" fill="#111"/><rect x="16.2" y="475.49" width="5.4" height="1.2" fill="#111"/><rect x="16.2" y="483.07" width="5.4" height="1.2" fill="#111"/><rect x="2" y="490.64" width="20" height="1.2" fill="#111"/><rect x="16.2" y="498.21" width="5.4" height="1.2" fill="#111"/><rect x="16.2" y="505.79" width="5.4" height="1.2" fill="#111"/><rect x="16.2" y="513.36" width="5.4" height="1.2" fill="#111"/><rect x="16.2" y="520.94" width="5.4" height="1.2" fill="#111"/><rect x="16.2" y="528.51" width="5.4" height="1.2" fill="#111"/><rect x="16.2" y="536.08" width="5.4" height="1.2" fill="#111"/><rect x="16.2" y="543.66" width="5.4" height="1.2" fill="#111"/><rect x="16.2" y="551.23" width="5.4" height="1.2" fill="#111"/><rect x="16.2" y="558.81" width="5.4" height="1.2" fill="#111"/><rect x="2" y="566.38" width="20" height="1.2" fill="#111"/><rect x="16.2" y="573.95" width="5.4" height="1.2" fill="#111"/><rect x="16.2" y="581.53" width="5.4" height="1.2" fill="#111"/><rect x="16.2" y="589.10" width="5.4" height="1.2" fill="#111"/><rect x="16.2" y="596.68" width="5.4" height="1.2" fill="#111"/><rect x="16.2" y="604.25" width="5.4" height="1.2" fill="#111"/><rect x="16.2" y="611.82" width="5.4" height="1.2" fill="#111"/><rect x="16.2" y="619.40" width="5.4" height="1.2" fill="#111"/><rect x="16.2" y="626.97" width="5.4" height="1.2" fill="#111"/><rect x="16.2" y="634.55" width="5.4" height="1.2" fill="#111"/><rect x="2" y="642.12" width="20" height="1.2" fill="#111"/><rect x="16.2" y="649.69" width="5.4" height="1.2" fill="#111"/><rect x="16.2" y="657.27" width="5.4" height="1.2" fill="#111"/><rect x="16.2" y="664.84" width="5.4" height="1.2" fill="#111"/><rect x="16.2" y="672.42" width="5.4" height="1.2" fill="#111"/><rect x="16.2" y="679.99" width="5.4" height="1.2" fill="#111"/><rect x="16.2" y="687.56" width="5.4" height="1.2" fill="#111"/><rect x="16.2" y="695.14" width="5.4" height="1.2" fill="#111"/><rect x="16.2" y="702.71" width="5.4" height="1.2" fill="#111"/><rect x="16.2" y="710.29" width="5.4" height="1.2" fill="#111"/><text transform="translate(13.9,34.50) rotate(-90)" font-family="Liberation Sans" font-size="14" fill="#111" textLength="22" lengthAdjust="spacingAndGlyphs">528</text><text transform="translate(13.9,110.24) rotate(-90)" font-family="Liberation Sans" font-size="14" fill="#111" textLength="22" lengthAdjust="spacingAndGlyphs">527</text><text transform="translate(13.9,185.98) rotate(-90)" font-family="Liberation Sans" font-size="14" fill="#111" textLength="22" lengthAdjust="spacingAndGlyphs">526</text><text transform="translate(13.9,261.72) rotate(-90)" font-family="Liberation Sans" font-size="14" fill="#111" textLength="22" lengthAdjust="spacingAndGlyphs">525</text><text transform="translate(13.9,337.46) rotate(-90)" font-family="Liberation Sans" font-size="14" fill="#111" textLength="22" lengthAdjust="spacingAndGlyphs">524</text><text transform="translate(13.9,413.20) rotate(-90)" font-family="Liberation Sans" font-size="14" fill="#111" textLength="22" lengthAdjust="spacingAndGlyphs">523</text><text transform="translate(13.9,488.94) rotate(-90)" font-family="Liberation Sans" font-size="14" fill="#111" textLength="22" lengthAdjust="spacingAndGlyphs">522</text><text transform="translate(13.9,564.68) rotate(-90)" font-family="Liberation Sans" font-size="14" fill="#111" textLength="22" lengthAdjust="spacingAndGlyphs">521</text><text transform="translate(13.9,640.42) rotate(-90)" font-family="Liberation Sans" font-size="14" fill="#111" textLength="22" lengthAdjust="spacingAndGlyphs">520</text><text transform="translate(13.9,716.16) rotate(-90)" font-family="Liberation Sans" font-size="14" fill="#111" textLength="22" lengthAdjust="spacingAndGlyphs">519</text><rect x="2" y="145.30" width="20" height="1" fill="#d8324a"/></svg>
<svg class="a" style="left:41px;top:259.5px;" width="1878" height="717.5" viewBox="0 0 1878 717.5"><path d="M580.90 0.00 L560.30 186.50 L550.30 717.50" fill="none" stroke="#70172f" stroke-width="1.15"/><path d="M621.60 0.00 L614.10 92.50 L607.40 289.70 L598.40 717.50" fill="none" stroke="#8c8a28" stroke-width="1.1"/><path d="M817.60 0.00 L790.20 422.60 L787.60 717.50" fill="none" stroke="#8c8a28" stroke-width="1.1"/><path d="M1101.80 3.60 h5.2 M1104.40 1.00 v5.2" stroke="#55555c" stroke-width=".9" fill="none"/><path d="M611.50 92.00 h5.2 M614.10 89.40 v5.2" stroke="#55555c" stroke-width=".9" fill="none"/><text x="614.00" y="52.20" font-family="Liberation Sans" font-size="16" fill="#3f3f47">149</text><text x="614.00" y="70.20" font-family="Liberation Sans" font-size="16" fill="#3f3f47">CS</text><text x="614.00" y="88.20" font-family="Liberation Sans" font-size="16" fill="#3f3f47">50.605</text><path d="M723.90 85.50 h5.2 M726.50 82.90 v5.2" stroke="#55555c" stroke-width=".9" fill="none"/><text x="726.40" y="45.70" font-family="Liberation Sans" font-size="16" fill="#3f3f47">193</text><text x="726.40" y="63.70" font-family="Liberation Sans" font-size="16" fill="#3f3f47">SP</text><text x="726.40" y="81.70" font-family="Liberation Sans" font-size="16" fill="#3f3f47">50.614</text><path d="M942.70 61.30 h5.2 M945.30 58.70 v5.2" stroke="#55555c" stroke-width=".9" fill="none"/><text x="945.20" y="21.50" font-family="Liberation Sans" font-size="16" fill="#3f3f47">298</text><text x="945.20" y="39.50" font-family="Liberation Sans" font-size="16" fill="#3f3f47">SP</text><text x="945.20" y="57.50" font-family="Liberation Sans" font-size="16" fill="#3f3f47">50.594</text><path d="M1254.80 100.70 h5.2 M1257.40 98.10 v5.2" stroke="#55555c" stroke-width=".9" fill="none"/><text x="1257.30" y="60.90" font-family="Liberation Sans" font-size="16" fill="#3f3f47">294</text><text x="1257.30" y="78.90" font-family="Liberation Sans" font-size="16" fill="#3f3f47">SP</text><text x="1257.30" y="96.90" font-family="Liberation Sans" font-size="16" fill="#3f3f47">50.625</text><path d="M1459.70 116.70 h5.2 M1462.30 114.10 v5.2" stroke="#55555c" stroke-width=".9" fill="none"/><text x="1462.20" y="76.90" font-family="Liberation Sans" font-size="16" fill="#3f3f47">295</text><text x="1462.20" y="94.90" font-family="Liberation Sans" font-size="16" fill="#3f3f47">SP</text><text x="1462.20" y="112.90" font-family="Liberation Sans" font-size="16" fill="#3f3f47">50.761</text><path d="M1573.80 101.30 h5.2 M1576.40 98.70 v5.2" stroke="#55555c" stroke-width=".9" fill="none"/><text x="1576.30" y="61.50" font-family="Liberation Sans" font-size="16" fill="#3f3f47">296</text><text x="1576.30" y="79.50" font-family="Liberation Sans" font-size="16" fill="#3f3f47">SP</text><text x="1576.30" y="97.50" font-family="Liberation Sans" font-size="16" fill="#3f3f47">50.806</text><path d="M557.60 187.30 h5.2 M560.20 184.70 v5.2" stroke="#55555c" stroke-width=".9" fill="none"/><text x="560.10" y="147.50" font-family="Liberation Sans" font-size="16" fill="#3f3f47">158</text><text x="560.10" y="165.50" font-family="Liberation Sans" font-size="16" fill="#3f3f47">FENCE</text><text x="560.10" y="183.50" font-family="Liberation Sans" font-size="16" fill="#3f3f47">50.636</text><path d="M604.80 289.20 h5.2 M607.40 286.60 v5.2" stroke="#55555c" stroke-width=".9" fill="none"/><text x="607.30" y="249.40" font-family="Liberation Sans" font-size="16" fill="#3f3f47">148</text><text x="607.30" y="267.40" font-family="Liberation Sans" font-size="16" fill="#3f3f47">CS</text><text x="607.30" y="285.40" font-family="Liberation Sans" font-size="16" fill="#3f3f47">50.514</text><path d="M1110.90 291.60 h5.2 M1113.50 289.00 v5.2" stroke="#55555c" stroke-width=".9" fill="none"/><text x="1113.40" y="251.80" font-family="Liberation Sans" font-size="16" fill="#3f3f47">297</text><text x="1113.40" y="269.80" font-family="Liberation Sans" font-size="16" fill="#3f3f47">SP</text><text x="1113.40" y="287.80" font-family="Liberation Sans" font-size="16" fill="#3f3f47">50.516</text><path d="M1446.80 388.40 h5.2 M1449.40 385.80 v5.2" stroke="#55555c" stroke-width=".9" fill="none"/><text x="1449.30" y="348.60" font-family="Liberation Sans" font-size="16" fill="#3f3f47">300</text><text x="1449.30" y="366.60" font-family="Liberation Sans" font-size="16" fill="#3f3f47">SP</text><text x="1449.30" y="384.60" font-family="Liberation Sans" font-size="16" fill="#3f3f47">50.668</text><path d="M1678.80 415.50 h5.2 M1681.40 412.90 v5.2" stroke="#55555c" stroke-width=".9" fill="none"/><text x="1681.30" y="375.70" font-family="Liberation Sans" font-size="16" fill="#3f3f47">301</text><text x="1681.30" y="393.70" font-family="Liberation Sans" font-size="16" fill="#3f3f47">SP</text><text x="1681.30" y="411.70" font-family="Liberation Sans" font-size="16" fill="#3f3f47">50.813</text><path d="M787.60 422.10 h5.2 M790.20 419.50 v5.2" stroke="#55555c" stroke-width=".9" fill="none"/><text x="790.10" y="382.30" font-family="Liberation Sans" font-size="16" fill="#3f3f47">103</text><text x="790.10" y="400.30" font-family="Liberation Sans" font-size="16" fill="#3f3f47">CS</text><text x="790.10" y="418.30" font-family="Liberation Sans" font-size="16" fill="#3f3f47">50.427</text><path d="M1061.80 445.60 h5.2 M1064.40 443.00 v5.2" stroke="#55555c" stroke-width=".9" fill="none"/><text x="1064.30" y="405.80" font-family="Liberation Sans" font-size="16" fill="#3f3f47">299</text><text x="1064.30" y="423.80" font-family="Liberation Sans" font-size="16" fill="#3f3f47">SP</text><text x="1064.30" y="441.80" font-family="Liberation Sans" font-size="16" fill="#3f3f47">50.454</text><text x="692.20" y="721.50" font-family="Liberation Sans" font-size="16" fill="#3f3f47">192</text><path d="M538.40 146.90 h11.2 M552.80 146.90 h11.5 M552.40 132.90 v25.5" stroke="#101010" stroke-width="1.1" fill="none"/></svg>
<div class="a" style="left:17px;top:977px;width:1902px;height:76px;background:#f0f0f0;"></div>
<div class="a" style="left:17px;top:977px;width:2px;height:76px;background:linear-gradient(90deg,#8fb0e8,#dfe6f2);"></div>
<div class="a" style="left:19px;top:977px;width:1900px;height:23.4px;background:#f0f0f0;"></div>
<svg class="a" style="left:19px;top:977px;" width="1900" height="23.4" viewBox="0 0 1900 23.4"><rect x="0" y="0" width="22" height="23" fill="#f1f0f1"/><rect x="20.4" y="0" width="1.6" height="23" fill="#b5b5b5"/><path d="M8.2 9 V16.2 H14.2" fill="none" stroke="#222" stroke-width="1.1"/><rect x="30.42" y="1.6" width="1.2" height="6.2" fill="#111"/><rect x="37.99" y="1.6" width="1.2" height="6.2" fill="#111"/><rect x="45.57" y="1.6" width="1.2" height="6.2" fill="#111"/><rect x="53.09" y="1.6" width="1.3" height="20.6" fill="#111"/><rect x="60.71" y="1.6" width="1.2" height="6.2" fill="#111"/><rect x="68.29" y="1.6" width="1.2" height="6.2" fill="#111"/><rect x="75.86" y="1.6" width="1.2" height="6.2" fill="#111"/><rect x="83.44" y="1.6" width="1.2" height="6.2" fill="#111"/><rect x="91.01" y="1.6" width="1.2" height="6.2" fill="#111"/><rect x="98.58" y="1.6" width="1.2" height="6.2" fill="#111"/><rect x="106.16" y="1.6" width="1.2" height="6.2" fill="#111"/><rect x="113.73" y="1.6" width="1.2" height="6.2" fill="#111"/><rect x="121.31" y="1.6" width="1.2" height="6.2" fill="#111"/><rect x="128.83" y="1.6" width="1.3" height="20.6" fill="#111"/><rect x="136.45" y="1.6" width="1.2" height="6.2" fill="#111"/><rect x="144.03" y="1.6" width="1.2" height="6.2" fill="#111"/><rect x="151.60" y="1.6" width="1.2" height="6.2" fill="#111"/><rect x="159.18" y="1.6" width="1.2" height="6.2" fill="#111"/><rect x="166.75" y="1.6" width="1.2" height="6.2" fill="#111"/><rect x="174.32" y="1.6" width="1.2" height="6.2" fill="#111"/><rect x="181.90" y="1.6" width="1.2" height="6.2" fill="#111"/><rect x="189.47" y="1.6" width="1.2" height="6.2" fill="#111"/><rect x="197.05" y="1.6" width="1.2" height="6.2" fill="#111"/><rect x="204.57" y="1.6" width="1.3" height="20.6" fill="#111"/><rect x="212.19" y="1.6" width="1.2" height="6.2" fill="#111"/><rect x="219.77" y="1.6" width="1.2" height="6.2" fill="#111"/><rect x="227.34" y="1.6" width="1.2" height="6.2" fill="#111"/><rect x="234.92" y="1.6" width="1.2" height="6.2" fill="#111"/><rect x="242.49" y="1.6" width="1.2" height="6.2" fill="#111"/><rect x="250.06" y="1.6" width="1.2" height="6.2" fill="#111"/><rect x="257.64" y="1.6" width="1.2" height="6.2" fill="#111"/><rect x="265.21" y="1.6" width="1.2" height="6.2" fill="#111"/><rect x="272.79" y="1.6" width="1.2" height="6.2" fill="#111"/><rect x="280.31" y="1.6" width="1.3" height="20.6" fill="#111"/><rect x="287.93" y="1.6" width="1.2" height="6.2" fill="#111"/><rect x="295.51" y="1.6" width="1.2" height="6.2" fill="#111"/><rect x="303.08" y="1.6" width="1.2" height="6.2" fill="#111"/><rect x="310.66" y="1.6" width="1.2" height="6.2" fill="#111"/><rect x="318.23" y="1.6" width="1.2" height="6.2" fill="#111"/><rect x="325.80" y="1.6" width="1.2" height="6.2" fill="#111"/><rect x="333.38" y="1.6" width="1.2" height="6.2" fill="#111"/><rect x="340.95" y="1.6" width="1.2" height="6.2" fill="#111"/><rect x="348.53" y="1.6" width="1.2" height="6.2" fill="#111"/><rect x="356.05" y="1.6" width="1.3" height="20.6" fill="#111"/><rect x="363.67" y="1.6" width="1.2" height="6.2" fill="#111"/><rect x="371.25" y="1.6" width="1.2" height="6.2" fill="#111"/><rect x="378.82" y="1.6" width="1.2" height="6.2" fill="#111"/><rect x="386.40" y="1.6" width="1.2" height="6.2" fill="#111"/><rect x="393.97" y="1.6" width="1.2" height="6.2" fill="#111"/><rect x="401.54" y="1.6" width="1.2" height="6.2" fill="#111"/><rect x="409.12" y="1.6" width="1.2" height="6.2" fill="#111"/><rect x="416.69" y="1.6" width="1.2" height="6.2" fill="#111"/><rect x="424.27" y="1.6" width="1.2" height="6.2" fill="#111"/><rect x="431.79" y="1.6" width="1.3" height="20.6" fill="#111"/><rect x="439.41" y="1.6" width="1.2" height="6.2" fill="#111"/><rect x="446.99" y="1.6" width="1.2" height="6.2" fill="#111"/><rect x="454.56" y="1.6" width="1.2" height="6.2" fill="#111"/><rect x="462.14" y="1.6" width="1.2" height="6.2" fill="#111"/><rect x="469.71" y="1.6" width="1.2" height="6.2" fill="#111"/><rect x="477.28" y="1.6" width="1.2" height="6.2" fill="#111"/><rect x="484.86" y="1.6" width="1.2" height="6.2" fill="#111"/><rect x="492.43" y="1.6" width="1.2" height="6.2" fill="#111"/><rect x="500.01" y="1.6" width="1.2" height="6.2" fill="#111"/><rect x="507.53" y="1.6" width="1.3" height="20.6" fill="#111"/><rect x="515.15" y="1.6" width="1.2" height="6.2" fill="#111"/><rect x="522.73" y="1.6" width="1.2" height="6.2" fill="#111"/><rect x="530.30" y="1.6" width="1.2" height="6.2" fill="#111"/><rect x="537.88" y="1.6" width="1.2" height="6.2" fill="#111"/><rect x="545.45" y="1.6" width="1.2" height="6.2" fill="#111"/><rect x="553.02" y="1.6" width="1.2" height="6.2" fill="#111"/><rect x="560.60" y="1.6" width="1.2" height="6.2" fill="#111"/><rect x="568.17" y="1.6" width="1.2" height="6.2" fill="#111"/><rect x="575.75" y="1.6" width="1.2" height="6.2" fill="#111"/><rect x="583.27" y="1.6" width="1.3" height="20.6" fill="#111"/><rect x="590.89" y="1.6" width="1.2" height="6.2" fill="#111"/><rect x="598.47" y="1.6" width="1.2" height="6.2" fill="#111"/><rect x="606.04" y="1.6" width="1.2" height="6.2" fill="#111"/><rect x="613.62" y="1.6" width="1.2" height="6.2" fill="#111"/><rect x="621.19" y="1.6" width="1.2" height="6.2" fill="#111"/><rect x="628.76" y="1.6" width="1.2" height="6.2" fill="#111"/><rect x="636.34" y="1.6" width="1.2" height="6.2" fill="#111"/><rect x="643.91" y="1.6" width="1.2" height="6.2" fill="#111"/><rect x="651.49" y="1.6" width="1.2" height="6.2" fill="#111"/><rect x="659.01" y="1.6" width="1.3" height="20.6" fill="#111"/><rect x="666.63" y="1.6" width="1.2" height="6.2" fill="#111"/><rect x="674.21" y="1.6" width="1.2" height="6.2" fill="#111"/><rect x="681.78" y="1.6" width="1.2" height="6.2" fill="#111"/><rect x="689.36" y="1.6" width="1.2" height="6.2" fill="#111"/><rect x="696.93" y="1.6" width="1.2" height="6.2" fill="#111"/><rect x="704.50" y="1.6" width="1.2" height="6.2" fill="#111"/><rect x="712.08" y="1.6" width="1.2" height="6.2" fill="#111"/><rect x="719.65" y="1.6" width="1.2" height="6.2" fill="#111"/><rect x="727.23" y="1.6" width="1.2" height="6.2" fill="#111"/><rect x="734.75" y="1.6" width="1.3" height="20.6" fill="#111"/><rect x="742.37" y="1.6" width="1.2" height="6.2" fill="#111"/><rect x="749.95" y="1.6" width="1.2" height="6.2" fill="#111"/><rect x="757.52" y="1.6" width="1.2" height="6.2" fill="#111"/><rect x="765.10" y="1.6" width="1.2" height="6.2" fill="#111"/><rect x="772.67" y="1.6" width="1.2" height="6.2" fill="#111"/><rect x="780.24" y="1.6" width="1.2" height="6.2" fill="#111"/><rect x="787.82" y="1.6" width="1.2" height="6.2" fill="#111"/><rect x="795.39" y="1.6" width="1.2" height="6.2" fill="#111"/><rect x="802.97" y="1.6" width="1.2" height="6.2" fill="#111"/><rect x="810.49" y="1.6" width="1.3" height="20.6" fill="#111"/><rect x="818.11" y="1.6" width="1.2" height="6.2" fill="#111"/><rect x="825.69" y="1.6" width="1.2" height="6.2" fill="#111"/><rect x="833.26" y="1.6" width="1.2" height="6.2" fill="#111"/><rect x="840.84" y="1.6" width="1.2" height="6.2" fill="#111"/><rect x="848.41" y="1.6" width="1.2" height="6.2" fill="#111"/><rect x="855.98" y="1.6" width="1.2" height="6.2" fill="#111"/><rect x="863.56" y="1.6" width="1.2" height="6.2" fill="#111"/><rect x="871.13" y="1.6" width="1.2" height="6.2" fill="#111"/><rect x="878.71" y="1.6" width="1.2" height="6.2" fill="#111"/><rect x="886.23" y="1.6" width="1.3" height="20.6" fill="#111"/><rect x="893.85" y="1.6" width="1.2" height="6.2" fill="#111"/><rect x="901.43" y="1.6" width="1.2" height="6.2" fill="#111"/><rect x="909.00" y="1.6" width="1.2" height="6.2" fill="#111"/><rect x="916.58" y="1.6" width="1.2" height="6.2" fill="#111"/><rect x="924.15" y="1.6" width="1.2" height="6.2" fill="#111"/><rect x="931.72" y="1.6" width="1.2" height="6.2" fill="#111"/><rect x="939.30" y="1.6" width="1.2" height="6.2" fill="#111"/><rect x="946.87" y="1.6" width="1.2" height="6.2" fill="#111"/><rect x="954.45" y="1.6" width="1.2" height="6.2" fill="#111"/><rect x="961.97" y="1.6" width="1.3" height="20.6" fill="#111"/><rect x="969.59" y="1.6" width="1.2" height="6.2" fill="#111"/><rect x="977.17" y="1.6" width="1.2" height="6.2" fill="#111"/><rect x="984.74" y="1.6" width="1.2" height="6.2" fill="#111"/><rect x="992.32" y="1.6" width="1.2" height="6.2" fill="#111"/><rect x="999.89" y="1.6" width="1.2" height="6.2" fill="#111"/><rect x="1007.46" y="1.6" width="1.2" height="6.2" fill="#111"/><rect x="1015.04" y="1.6" width="1.2" height="6.2" fill="#111"/><rect x="1022.61" y="1.6" width="1.2" height="6.2" fill="#111"/><rect x="1030.19" y="1.6" width="1.2" height="6.2" fill="#111"/><rect x="1037.71" y="1.6" width="1.3" height="20.6" fill="#111"/><rect x="1045.33" y="1.6" width="1.2" height="6.2" fill="#111"/><rect x="1052.91" y="1.6" width="1.2" height="6.2" fill="#111"/><rect x="1060.48" y="1.6" width="1.2" height="6.2" fill="#111"/><rect x="1068.06" y="1.6" width="1.2" height="6.2" fill="#111"/><rect x="1075.63" y="1.6" width="1.2" height="6.2" fill="#111"/><rect x="1083.20" y="1.6" width="1.2" height="6.2" fill="#111"/><rect x="1090.78" y="1.6" width="1.2" height="6.2" fill="#111"/><rect x="1098.35" y="1.6" width="1.2" height="6.2" fill="#111"/><rect x="1105.93" y="1.6" width="1.2" height="6.2" fill="#111"/><rect x="1113.45" y="1.6" width="1.3" height="20.6" fill="#111"/><rect x="1121.07" y="1.6" width="1.2" height="6.2" fill="#111"/><rect x="1128.65" y="1.6" width="1.2" height="6.2" fill="#111"/><rect x="1136.22" y="1.6" width="1.2" height="6.2" fill="#111"/><rect x="1143.80" y="1.6" width="1.2" height="6.2" fill="#111"/><rect x="1151.37" y="1.6" width="1.2" height="6.2" fill="#111"/><rect x="1158.94" y="1.6" width="1.2" height="6.2" fill="#111"/><rect x="1166.52" y="1.6" width="1.2" height="6.2" fill="#111"/><rect x="1174.09" y="1.6" width="1.2" height="6.2" fill="#111"/><rect x="1181.67" y="1.6" width="1.2" height="6.2" fill="#111"/><rect x="1189.19" y="1.6" width="1.3" height="20.6" fill="#111"/><rect x="1196.81" y="1.6" width="1.2" height="6.2" fill="#111"/><rect x="1204.39" y="1.6" width="1.2" height="6.2" fill="#111"/><rect x="1211.96" y="1.6" width="1.2" height="6.2" fill="#111"/><rect x="1219.54" y="1.6" width="1.2" height="6.2" fill="#111"/><rect x="1227.11" y="1.6" width="1.2" height="6.2" fill="#111"/><rect x="1234.68" y="1.6" width="1.2" height="6.2" fill="#111"/><rect x="1242.26" y="1.6" width="1.2" height="6.2" fill="#111"/><rect x="1249.83" y="1.6" width="1.2" height="6.2" fill="#111"/><rect x="1257.41" y="1.6" width="1.2" height="6.2" fill="#111"/><rect x="1264.93" y="1.6" width="1.3" height="20.6" fill="#111"/><rect x="1272.55" y="1.6" width="1.2" height="6.2" fill="#111"/><rect x="1280.13" y="1.6" width="1.2" height="6.2" fill="#111"/><rect x="1287.70" y="1.6" width="1.2" height="6.2" fill="#111"/><rect x="1295.28" y="1.6" width="1.2" height="6.2" fill="#111"/><rect x="1302.85" y="1.6" width="1.2" height="6.2" fill="#111"/><rect x="1310.42" y="1.6" width="1.2" height="6.2" fill="#111"/><rect x="1318.00" y="1.6" width="1.2" height="6.2" fill="#111"/><rect x="1325.57" y="1.6" width="1.2" height="6.2" fill="#111"/><rect x="1333.15" y="1.6" width="1.2" height="6.2" fill="#111"/><rect x="1340.67" y="1.6" width="1.3" height="20.6" fill="#111"/><rect x="1348.29" y="1.6" width="1.2" height="6.2" fill="#111"/><rect x="1355.87" y="1.6" width="1.2" height="6.2" fill="#111"/><rect x="1363.44" y="1.6" width="1.2" height="6.2" fill="#111"/><rect x="1371.02" y="1.6" width="1.2" height="6.2" fill="#111"/><rect x="1378.59" y="1.6" width="1.2" height="6.2" fill="#111"/><rect x="1386.16" y="1.6" width="1.2" height="6.2" fill="#111"/><rect x="1393.74" y="1.6" width="1.2" height="6.2" fill="#111"/><rect x="1401.31" y="1.6" width="1.2" height="6.2" fill="#111"/><rect x="1408.89" y="1.6" width="1.2" height="6.2" fill="#111"/><rect x="1416.41" y="1.6" width="1.3" height="20.6" fill="#111"/><rect x="1424.03" y="1.6" width="1.2" height="6.2" fill="#111"/><rect x="1431.61" y="1.6" width="1.2" height="6.2" fill="#111"/><rect x="1439.18" y="1.6" width="1.2" height="6.2" fill="#111"/><rect x="1446.76" y="1.6" width="1.2" height="6.2" fill="#111"/><rect x="1454.33" y="1.6" width="1.2" height="6.2" fill="#111"/><rect x="1461.90" y="1.6" width="1.2" height="6.2" fill="#111"/><rect x="1469.48" y="1.6" width="1.2" height="6.2" fill="#111"/><rect x="1477.05" y="1.6" width="1.2" height="6.2" fill="#111"/><rect x="1484.63" y="1.6" width="1.2" height="6.2" fill="#111"/><rect x="1492.15" y="1.6" width="1.3" height="20.6" fill="#111"/><rect x="1499.77" y="1.6" width="1.2" height="6.2" fill="#111"/><rect x="1507.35" y="1.6" width="1.2" height="6.2" fill="#111"/><rect x="1514.92" y="1.6" width="1.2" height="6.2" fill="#111"/><rect x="1522.50" y="1.6" width="1.2" height="6.2" fill="#111"/><rect x="1530.07" y="1.6" width="1.2" height="6.2" fill="#111"/><rect x="1537.64" y="1.6" width="1.2" height="6.2" fill="#111"/><rect x="1545.22" y="1.6" width="1.2" height="6.2" fill="#111"/><rect x="1552.79" y="1.6" width="1.2" height="6.2" fill="#111"/><rect x="1560.37" y="1.6" width="1.2" height="6.2" fill="#111"/><rect x="1567.89" y="1.6" width="1.3" height="20.6" fill="#111"/><rect x="1575.51" y="1.6" width="1.2" height="6.2" fill="#111"/><rect x="1583.09" y="1.6" width="1.2" height="6.2" fill="#111"/><rect x="1590.66" y="1.6" width="1.2" height="6.2" fill="#111"/><rect x="1598.24" y="1.6" width="1.2" height="6.2" fill="#111"/><rect x="1605.81" y="1.6" width="1.2" height="6.2" fill="#111"/><rect x="1613.38" y="1.6" width="1.2" height="6.2" fill="#111"/><rect x="1620.96" y="1.6" width="1.2" height="6.2" fill="#111"/><rect x="1628.53" y="1.6" width="1.2" height="6.2" fill="#111"/><rect x="1636.11" y="1.6" width="1.2" height="6.2" fill="#111"/><rect x="1643.63" y="1.6" width="1.3" height="20.6" fill="#111"/><rect x="1651.25" y="1.6" width="1.2" height="6.2" fill="#111"/><rect x="1658.83" y="1.6" width="1.2" height="6.2" fill="#111"/><rect x="1666.40" y="1.6" width="1.2" height="6.2" fill="#111"/><rect x="1673.98" y="1.6" width="1.2" height="6.2" fill="#111"/><rect x="1681.55" y="1.6" width="1.2" height="6.2" fill="#111"/><rect x="1689.12" y="1.6" width="1.2" height="6.2" fill="#111"/><rect x="1696.70" y="1.6" width="1.2" height="6.2" fill="#111"/><rect x="1704.27" y="1.6" width="1.2" height="6.2" fill="#111"/><rect x="1711.85" y="1.6" width="1.2" height="6.2" fill="#111"/><rect x="1719.37" y="1.6" width="1.3" height="20.6" fill="#111"/><rect x="1726.99" y="1.6" width="1.2" height="6.2" fill="#111"/><rect x="1734.57" y="1.6" width="1.2" height="6.2" fill="#111"/><rect x="1742.14" y="1.6" width="1.2" height="6.2" fill="#111"/><rect x="1749.72" y="1.6" width="1.2" height="6.2" fill="#111"/><rect x="1757.29" y="1.6" width="1.2" height="6.2" fill="#111"/><rect x="1764.86" y="1.6" width="1.2" height="6.2" fill="#111"/><rect x="1772.44" y="1.6" width="1.2" height="6.2" fill="#111"/><rect x="1780.01" y="1.6" width="1.2" height="6.2" fill="#111"/><rect x="1787.59" y="1.6" width="1.2" height="6.2" fill="#111"/><rect x="1795.11" y="1.6" width="1.3" height="20.6" fill="#111"/><rect x="1802.73" y="1.6" width="1.2" height="6.2" fill="#111"/><rect x="1810.31" y="1.6" width="1.2" height="6.2" fill="#111"/><rect x="1817.88" y="1.6" width="1.2" height="6.2" fill="#111"/><rect x="1825.46" y="1.6" width="1.2" height="6.2" fill="#111"/><rect x="1833.03" y="1.6" width="1.2" height="6.2" fill="#111"/><rect x="1840.60" y="1.6" width="1.2" height="6.2" fill="#111"/><rect x="1848.18" y="1.6" width="1.2" height="6.2" fill="#111"/><rect x="1855.75" y="1.6" width="1.2" height="6.2" fill="#111"/><rect x="1863.33" y="1.6" width="1.2" height="6.2" fill="#111"/><rect x="1870.85" y="1.6" width="1.3" height="20.6" fill="#111"/><rect x="1878.47" y="1.6" width="1.2" height="6.2" fill="#111"/><rect x="1886.05" y="1.6" width="1.2" height="6.2" fill="#111"/><rect x="1893.62" y="1.6" width="1.2" height="6.2" fill="#111"/><text x="55.84" y="21.1" font-family="Liberation Sans" font-size="13" fill="#111">991</text><text x="131.58" y="21.1" font-family="Liberation Sans" font-size="13" fill="#111">992</text><text x="207.32" y="21.1" font-family="Liberation Sans" font-size="13" fill="#111">993</text><text x="283.06" y="21.1" font-family="Liberation Sans" font-size="13" fill="#111">994</text><text x="358.80" y="21.1" font-family="Liberation Sans" font-size="13" fill="#111">995</text><text x="434.54" y="21.1" font-family="Liberation Sans" font-size="13" fill="#111">996</text><text x="510.28" y="21.1" font-family="Liberation Sans" font-size="13" fill="#111">997</text><text x="586.02" y="21.1" font-family="Liberation Sans" font-size="13" fill="#111">998</text><text x="661.76" y="21.1" font-family="Liberation Sans" font-size="13" fill="#111">999</text><text x="737.50" y="21.1" font-family="Liberation Sans" font-size="13" fill="#111" letter-spacing=".45">1000</text><text x="813.24" y="21.1" font-family="Liberation Sans" font-size="13" fill="#111" letter-spacing=".45">1001</text><text x="888.98" y="21.1" font-family="Liberation Sans" font-size="13" fill="#111" letter-spacing=".45">1002</text><text x="964.72" y="21.1" font-family="Liberation Sans" font-size="13" fill="#111" letter-spacing=".45">1003</text><text x="1040.46" y="21.1" font-family="Liberation Sans" font-size="13" fill="#111" letter-spacing=".45">1004</text><text x="1116.20" y="21.1" font-family="Liberation Sans" font-size="13" fill="#111" letter-spacing=".45">1005</text><text x="1191.94" y="21.1" font-family="Liberation Sans" font-size="13" fill="#111" letter-spacing=".45">1006</text><text x="1267.68" y="21.1" font-family="Liberation Sans" font-size="13" fill="#111" letter-spacing=".45">1007</text><text x="1343.42" y="21.1" font-family="Liberation Sans" font-size="13" fill="#111" letter-spacing=".45">1008</text><text x="1419.16" y="21.1" font-family="Liberation Sans" font-size="13" fill="#111" letter-spacing=".45">1009</text><text x="1494.90" y="21.1" font-family="Liberation Sans" font-size="13" fill="#111" letter-spacing=".45">1010</text><text x="1570.64" y="21.1" font-family="Liberation Sans" font-size="13" fill="#111" letter-spacing=".45">1011</text><text x="1646.38" y="21.1" font-family="Liberation Sans" font-size="13" fill="#111" letter-spacing=".45">1012</text><text x="1722.12" y="21.1" font-family="Liberation Sans" font-size="13" fill="#111" letter-spacing=".45">1013</text><text x="1797.86" y="21.1" font-family="Liberation Sans" font-size="13" fill="#111" letter-spacing=".45">1014</text><text x="1873.60" y="21.1" font-family="Liberation Sans" font-size="13" fill="#111" letter-spacing=".45">1015</text><rect x="572.90" y="1" width="1" height="22" fill="#d8324a"/></svg>
<div class="a" style="left:19px;top:1000px;width:1900px;height:1.2px;background:#a8a8a8;"></div>
<div class="a" style="left:19px;top:1001.2px;width:1900px;height:26px;background:#f0f0f0;"></div>
<div class="a" style="left:19px;top:1001.2px;width:2px;height:26px;background:#9c9c9c;"></div>
<div class="a" style="left:46px;top:1001.5px;width:351px;height:24.5px;background:#efeeef;border:1px solid #fbfbfb;border-right:1.5px solid #7e7e7e;border-bottom:2px solid #747474;border-top:none;"></div>
<span class="t" style="left:48.00px;top:1004.46px;font-size:15.4px;line-height:15.4px;color:#111;letter-spacing:0.044px;">footprint and gl combo with platform - Drawing001</span>
<div class="a" style="left:399px;top:1001.5px;width:314px;height:24.5px;background:#efeeef;border:1px solid #fbfbfb;border-right:1.5px solid #7e7e7e;border-bottom:2px solid #747474;border-top:none;"></div>
<span class="t" style="left:401.50px;top:1004.46px;font-size:15.4px;line-height:15.4px;color:#111;">footprint and gl combo with platform - Survey</span>
<div class="a" style="left:715px;top:1001.5px;width:184.5px;height:24.5px;background:#efeeef;border:1px solid #fbfbfb;border-right:1.5px solid #7e7e7e;border-bottom:2px solid #747474;border-top:none;"></div>
<span class="t" style="left:718.00px;top:1004.46px;font-size:15.4px;line-height:15.4px;color:#111;letter-spacing:-0.012px;">silverbay sample - Survey</span>
<div class="a" style="left:901.5px;top:1001.5px;width:137.0px;height:24.5px;background:#efeeef;border:1px solid #fbfbfb;border-right:1.5px solid #7e7e7e;border-bottom:2px solid #747474;border-top:none;"></div>
<span class="t" style="left:905.00px;top:1004.46px;font-size:15.4px;line-height:15.4px;color:#111;letter-spacing:0.013px;">untitled11 - Survey</span>
<div class="a" style="left:1040px;top:1001.5px;width:136.5px;height:24.5px;background:#efeeef;border:1px solid #fbfbfb;border-right:1.5px solid #7e7e7e;border-bottom:2px solid #747474;border-top:none;"></div>
<span class="t" style="left:1043.50px;top:1004.46px;font-size:15.4px;line-height:15.4px;color:#a8283c;letter-spacing:-0.074px;">untitled12 - Survey</span>
<span class="t" style="left:1017.5px;top:1001.54px;font-size:27.6px;line-height:27.6px;font-weight:bold;color:#2f9df5;-webkit-text-stroke:1.1px #2f9df5;letter-spacing:1.2px;transform:scaleX(0.6674);transform-origin:0 50%;opacity:.95;">AstroCrack.com</span>
<div class="a" style="left:17px;top:1027px;width:1902px;height:26px;background:#f0f0f0;border-top:1px solid #fafafa;"></div>
<span class="t" style="left:20.00px;top:1033.71px;font-size:17px;line-height:17px;color:#111;letter-spacing:0.013px;">For Help, press F1</span>
<div class="a" style="left:1246.3px;top:1030px;width:1.2px;height:23px;background:#a4a4a4;"></div>
<div class="a" style="left:1247.5px;top:1030px;width:1px;height:23px;background:#fbfbfb;"></div>
<div class="a" style="left:1274px;top:1030px;width:1.2px;height:23px;background:#a4a4a4;"></div>
<div class="a" style="left:1275.2px;top:1030px;width:1px;height:23px;background:#fbfbfb;"></div>
<div class="a" style="left:1277px;top:1030px;width:405px;height:23px;border-left:1px solid #a0a0a0;border-top:1px solid #a0a0a0;border-right:1px solid #fdfdfd;"></div>
<div class="a" style="left:1684.3px;top:1030px;width:97.70000000000005px;height:23px;border-left:1px solid #a0a0a0;border-top:1px solid #a0a0a0;border-right:1px solid #fdfdfd;"></div>
<div class="a" style="left:1785.5px;top:1030px;width:37.5px;height:23px;border-left:1px solid #a0a0a0;border-top:1px solid #a0a0a0;border-right:1px solid #fdfdfd;"></div>
<div class="a" style="left:1826px;top:1030px;width:93px;height:23px;border-left:1px solid #a0a0a0;border-top:1px solid #a0a0a0;border-right:1px solid #fdfdfd;"></div>
<span class="t" style="left:1280.00px;top:1033.91px;font-size:17px;line-height:17px;color:#111;letter-spacing:0.113px;">E 997.865,  N 526.562</span>
<span class="t" style="left:1696.50px;top:1033.91px;font-size:17px;line-height:17px;color:#111;letter-spacing:0.167px;">M S N Z</span>
<svg class="a" style="left:1140px;top:1033.6px;" width="18" height="16" viewBox="0 0 18 16"><path d="M1.4 3.4 Q1.4 2 2.8 2 H15 Q16.4 2 16.4 3.4 V12.6 Q16.4 14 15 14 H2.8 Q1.4 14 1.4 12.6Z" fill="#e9b672" stroke="#c48a3e" stroke-width=".8"/>
<path d="M2 5 H16 M2 6.6 H16" stroke="#f6dcae" stroke-width=".8"/>
<path d="M1.8 7.6 H6 Q6.4 10 9 10 Q11.6 10 12 7.6 H16 V12.6 Q16 13.6 15 13.6 H2.8 Q1.8 13.6 1.8 12.6Z" fill="#d99a52" stroke="#b8782e" stroke-width=".6"/></svg>
<svg class="a" style="left:1168px;top:1032px;" width="20" height="18" viewBox="0 0 20 18"><ellipse cx="12.6" cy="6.4" rx="5.6" ry="4.4" fill="#eaf4fb" stroke="#79a9cf" stroke-width=".9"/>
<path d="M9.6 9.6 L8.6 12.6 L12 10.6Z" fill="#eaf4fb" stroke="#79a9cf" stroke-width=".7"/>
<circle cx="6.4" cy="8" r="2.6" fill="#c9955e"/>
<path d="M2 16.4 Q2 11.6 6.4 11.4 Q10.8 11.6 10.8 16.4Z" fill="#5b8fd2"/>
<path d="M5.4 11.8 L6.4 14 L7.4 11.8Z" fill="#fff"/></svg>
<svg class="a" style="left:1194px;top:1034px;" width="23" height="14" viewBox="0 0 23 14"><path d="M0.6 7 H3.6" stroke="#111" stroke-width="1.3"/>
<path d="M8.6 1.2 Q3.4 1.6 3.4 7 Q3.4 12.4 8.6 12.8 L11 12.2 V1.8Z" fill="#f4f4f4" stroke="#111" stroke-width="1.3"/>
<path d="M6.4 2 V12 M8.8 1.6 V12.4" stroke="#111" stroke-width="1.1"/>
<path d="M11 4.4 H14 M11 9.6 H14" stroke="#111" stroke-width="1.5"/>
<circle cx="16.2" cy="6.9" r="2.2" fill="#fbeaea" stroke="#d84040" stroke-width="1"/><path d="M14.7 5.4 L17.7 8.4" stroke="#d84040" stroke-width="1"/>
<path d="M20.9 1.2 V12.8 M18.8 1.4 Q20.6 1.6 20.9 3.2 M18.8 12.6 Q20.6 12.4 20.9 10.8" fill="none" stroke="#111" stroke-width="1.4"/></svg>
<svg class="a" style="left:1224.6px;top:1034.6px;" width="18" height="14" viewBox="0 0 18 14"><path d="M1.6 10.4 L8.6 2.8 L15.8 10.4Z" fill="#2fa32c" stroke="#1c7a1c" stroke-width=".9"/><path d="M3.8 9.6 L8.6 4.4 L10.8 6.8" fill="none" stroke="#7ad06e" stroke-width=".8"/></svg>
<svg class="a" style="left:1254.5px;top:1033.8px;" width="14" height="14" viewBox="0 0 14 14"><rect x="1.4" y="1.6" width="10.6" height="10.6" fill="#d2453f" stroke="#a83232" stroke-width=".8"/><rect x="2.6" y="2.8" width="8" height="3.4" fill="#e2706a" opacity=".7"/></svg>
<svg class="a" style="left:1853.5px;top:1017.5px;" width="48" height="34" viewBox="0 0 48 34"><g fill="#fff" opacity=".82"><path d="M6 22 Q8 8 26 5 Q22 18 8 24Z"/><path d="M22 24 Q26 10 44 5 Q40 18 26 25Z"/><text x="5" y="33" font-family="Liberation Sans" font-size="8.5" font-weight="bold" textLength="36">TOPCON</text></g></svg>
<div class="a" style="left:6px;top:1053px;width:1913px;height:11px;background:#5b87d8;"></div>
<div class="a" style="left:6px;top:1053px;width:1913px;height:1.2px;background:#86a4de;"></div>
<div class="a" style="left:254px;top:1064px;width:1404px;height:15px;background:repeating-linear-gradient(135deg,#f4f4f4 0 7px,#e9e9e9 7px 12px);"></div>
<div class="a" style="left:1657.5px;top:1064px;width:43.5px;height:15px;background:repeating-linear-gradient(135deg,#12508e 0 6px,#1d5f9d 6px 11px);"></div>
</div></body></html>
